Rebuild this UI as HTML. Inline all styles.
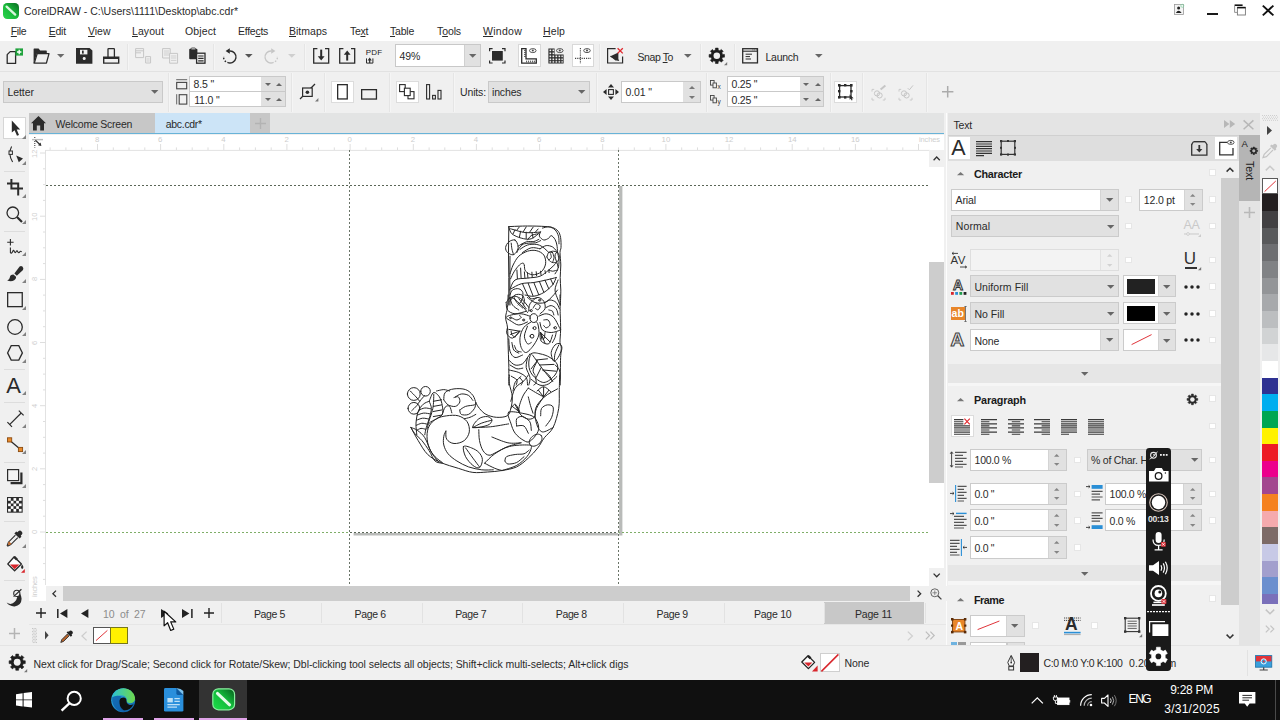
<!DOCTYPE html>
<html><head><meta charset="utf-8"><title>CorelDRAW</title>
<style>
*{box-sizing:border-box;margin:0;padding:0}
html,body{width:1280px;height:720px;overflow:hidden;background:#f0f0f0;font-family:"Liberation Sans",sans-serif;font-size:12px;color:#222}
.a{position:absolute}
.t{position:absolute;white-space:pre;line-height:1.16}
svg{position:absolute;overflow:visible}
u{text-decoration:underline;text-underline-offset:1px}
</style></head><body>
<!-- s_top -->
<div class="a" style="left:0px;top:0px;width:1280px;height:41px;background:#fff;"></div>
<svg style="left:2.5px;top:2.5px" width="16" height="16" viewBox="0 0 16 16"><defs><linearGradient id="lg" x1="0" y1="1" x2="1" y2="0"><stop offset="0" stop-color="#2bd44c"/><stop offset=".5" stop-color="#19b83a"/><stop offset="1" stop-color="#0a6a22"/></linearGradient></defs><rect x="0" y="0" width="16" height="16" rx="4.2" fill="url(#lg)"/><path d="M3.6 3.6 L12.2 11.6" stroke="#d9f7dd" stroke-width="2.3" stroke-linecap="round"/></svg>
<div class="t" style="left:24.0px;top:5.2px;font-size:10.5px;letter-spacing:0.006px;color:#2a2a2a;">CorelDRAW - C:\Users\1111\Desktop\abc.cdr*</div>
<svg style="left:1174px;top:4px" width="10" height="11" viewBox="0 0 10 11"><rect x=".5" y=".5" width="9" height="10" fill="#f4f4f4" stroke="#9a9a9a" stroke-width=".8"/><circle cx="4.6" cy="4" r="1.5" fill="#222"/><path d="M1.8 9 Q4.6 4.5 7.6 9Z" fill="#222"/><circle cx="8.3" cy="1.8" r="1.5" fill="none" stroke="#7fd6a0" stroke-width=".7"/></svg>
<div class="a" style="left:1207px;top:13px;width:10.5px;height:2px;background:#1a1a1a;"></div>
<svg style="left:1234px;top:4px" width="12" height="12" viewBox="0 0 12 12"><path d="M.6 1.2H8.6" stroke="#111" stroke-width="1.6"/><path d="M.6 1.5V8.4H3" stroke="#888" stroke-width=".9" fill="none"/><rect x="3.4" y="3.6" width="8" height="7.4" fill="#fff" stroke="#777" stroke-width=".9"/><path d="M3.2 3.6H11.6" stroke="#111" stroke-width="1.6"/></svg>
<svg style="left:1262px;top:4.5px" width="12" height="11" viewBox="0 0 12 11"><path d="M.8 .6L11.4 10.4M11.4 .6L.8 10.4" stroke="#111" stroke-width="1.9"/></svg>
<div class="t" style="left:10.8px;top:25.3px;font-size:10.5px;letter-spacing:-0.355px;color:#2a2a2a;"><u>F</u>ile</div>
<div class="t" style="left:48.8px;top:25.3px;font-size:10.5px;letter-spacing:-0.273px;color:#2a2a2a;"><u>E</u>dit</div>
<div class="t" style="left:88.0px;top:25.3px;font-size:10.5px;letter-spacing:-0.017px;color:#2a2a2a;"><u>V</u>iew</div>
<div class="t" style="left:132.0px;top:25.3px;font-size:10.5px;letter-spacing:0.079px;color:#2a2a2a;"><u>L</u>ayout</div>
<div class="t" style="left:185.0px;top:25.3px;font-size:10.5px;letter-spacing:0.109px;color:#2a2a2a;">Ob<u>j</u>ect</div>
<div class="t" style="left:238.0px;top:25.3px;font-size:10.5px;letter-spacing:-0.272px;color:#2a2a2a;">Effe<u>c</u>ts</div>
<div class="t" style="left:289.0px;top:25.3px;font-size:10.5px;letter-spacing:0.010px;color:#2a2a2a;"><u>B</u>itmaps</div>
<div class="t" style="left:350.0px;top:25.3px;font-size:10.5px;letter-spacing:-0.314px;color:#2a2a2a;">Te<u>x</u>t</div>
<div class="t" style="left:390.0px;top:25.3px;font-size:10.5px;letter-spacing:-0.220px;color:#2a2a2a;"><u>T</u>able</div>
<div class="t" style="left:437.0px;top:25.3px;font-size:10.5px;letter-spacing:-0.102px;color:#2a2a2a;">T<u>o</u>ols</div>
<div class="t" style="left:483.0px;top:25.3px;font-size:10.5px;letter-spacing:0.276px;color:#2a2a2a;"><u>W</u>indow</div>
<div class="t" style="left:543.0px;top:25.3px;font-size:10.5px;letter-spacing:0.102px;color:#2a2a2a;"><u>H</u>elp</div>
<div class="a" style="left:0px;top:41px;width:1280px;height:30px;background:#f0f0f0;"></div>
<div class="a" style="left:0px;top:70.5px;width:1280px;height:1px;background:#e2e2e2;"></div>
<div class="a" style="left:0px;top:71.5px;width:1280px;height:41.5px;background:#f0f0f0;"></div>
<svg style="left:6px;top:47.5px" width="18" height="17" viewBox="0 0 18 17"><path d="M4.2 3.6H9.6V15.4H1.2V6.6Z" fill="none" stroke="#2b2b2b" stroke-width="1.3" stroke-linejoin="round"/><rect x="9.4" y=".4" width="7.6" height="7.2" fill="#1fa23c"/><path d="M13.2 1.8V6.2M11 4H15.4" stroke="#fff" stroke-width="1.3"/></svg>
<svg style="left:33px;top:48px" width="17" height="16" viewBox="0 0 17 16"><path d="M.6 15.2V1.2Q.6 .6 1.2 .6H5.6L7.2 2.6H13.2Q13.8 2.6 13.8 3.2V5.2H4L.9 15.2Z" fill="#2b2b2b"/><path d="M4.2 5.6H16L13.4 15.2H1.2Z" fill="#f0f0f0" stroke="#2b2b2b" stroke-width="1.3" stroke-linejoin="round"/></svg>
<svg style="left:57px;top:53.9px" width="7.4" height="3.8"><path d="M0 0H7.4L3.7 3.8Z" fill="#6a6a6a"/></svg>
<svg style="left:76px;top:48px" width="16.4" height="15.8" viewBox="0 0 16.4 15.8"><path d="M0 0H13.6L16.4 2.6V15.8H0Z" fill="#2b2b2b"/><rect x="4" y="1.8" width="7.4" height="4.6" fill="#f0f0f0"/><rect x="6" y="2.6" width="1.7" height="3" fill="#2b2b2b"/><circle cx="8.2" cy="10.6" r="1.5" fill="#f0f0f0"/></svg>
<svg style="left:102.5px;top:48px" width="16.4" height="15.8" viewBox="0 0 16.4 15.8"><path d="M5 9V1.2Q5 .7 5.6 .7H10.8Q11.4 .7 11.4 1.2V9" fill="none" stroke="#2b2b2b" stroke-width="1.3"/><path d="M.7 9.2H15.7V15.1H.7Z" fill="none" stroke="#2b2b2b" stroke-width="1.4"/><path d="M.7 9.2H15.7V11H.7Z" fill="#2b2b2b"/></svg>
<div class="a" style="left:127px;top:43.5px;width:1px;height:26px;background:#e5e5e5;"></div>
<div class="a" style="left:128px;top:43.5px;width:1px;height:26px;background:#f5f5f5;"></div>
<svg style="left:135px;top:48px" width="16.4" height="15.8" viewBox="0 0 16.4 15.8"><path d="M.6 .6H8.6V9.6H.6Z" fill="none" stroke="#c6c6c6" stroke-width="1"/><path d="M.6 2.8H8.6M.6 4.8H6" stroke="#c6c6c6" stroke-width="1"/><path d="M10.6 8.6H15.6V15H10.6Z" fill="none" stroke="#c6c6c6" stroke-width="1"/><path d="M11.6 11H14.6M11.6 13H14.6" stroke="#c6c6c6" stroke-width=".8"/></svg>
<svg style="left:162px;top:48px" width="16.4" height="15.8" viewBox="0 0 16.4 15.8"><path d="M.6 .6H8.2V10H.6Z" fill="none" stroke="#c6c6c6" stroke-width="1"/><path d="M2 3H7M2 5H7M2 7H7" stroke="#c6c6c6" stroke-width=".8"/><path d="M7.6 5.4H15.6V15.2H7.6Z" fill="#f0f0f0" stroke="#c6c6c6" stroke-width="1"/><path d="M9 8H14.4M9 10H14.4M9 12.4H14.4" stroke="#c6c6c6" stroke-width=".8"/></svg>
<svg style="left:188.6px;top:48px" width="16.8" height="15.8" viewBox="0 0 16.8 15.8"><rect x=".2" y=".8" width="8.2" height="10.4" rx="1" fill="#2b2b2b"/><rect x="2.2" y="0" width="4.2" height="1.8" rx=".6" fill="#f0f0f0" stroke="#2b2b2b" stroke-width=".8"/><rect x="7.6" y="5.2" width="8.4" height="10" fill="#f0f0f0" stroke="#2b2b2b" stroke-width="1.3"/><path d="M9.2 8H14.6M9.2 10.4H14.6M9.2 12.8H14.6" stroke="#2b2b2b" stroke-width="1.2"/></svg>
<div class="a" style="left:212.5px;top:43.5px;width:1px;height:26px;background:#e5e5e5;"></div>
<div class="a" style="left:213.5px;top:43.5px;width:1px;height:26px;background:#f5f5f5;"></div>
<svg style="left:221px;top:47.5px" width="17" height="17" viewBox="0 0 17 17"><path d="M8.6 3A6 6 0 1 1 6.4 14.4" fill="none" stroke="#2b2b2b" stroke-width="1.4"/><path d="M5 13.8A6 6 0 0 1 2.6 8" fill="none" stroke="#2b2b2b" stroke-width="1.4" stroke-dasharray="1.6 1.6"/><path d="M4.6 3L8.8 .2V5.8Z" fill="#2b2b2b"/></svg>
<svg style="left:244.8px;top:53.9px" width="7.6" height="3.8"><path d="M0 0H7.6L3.8 3.8Z" fill="#555"/></svg>
<svg style="left:263px;top:47.5px" width="17" height="17" viewBox="0 0 17 17"><path d="M8.4 3A6 6 0 1 0 10.6 14.4" fill="none" stroke="#c6c6c6" stroke-width="1.3"/><path d="M12 13.8A6 6 0 0 0 14.4 8" fill="none" stroke="#c6c6c6" stroke-width="1.3" stroke-dasharray="1.6 1.6"/><path d="M12.4 3L8.2 .2V5.8Z" fill="#c6c6c6"/></svg>
<svg style="left:287.7px;top:53.9px" width="7.6" height="3.8"><path d="M0 0H7.6L3.8 3.8Z" fill="#cfcfcf"/></svg>
<div class="a" style="left:304px;top:43.5px;width:1px;height:26px;background:#e5e5e5;"></div>
<div class="a" style="left:305px;top:43.5px;width:1px;height:26px;background:#f5f5f5;"></div>
<svg style="left:312.5px;top:48px" width="16.4" height="15.8" viewBox="0 0 16.4 15.8"><path d="M4.4 .7H.7V15.1H15.7V.7H12" fill="none" stroke="#2b2b2b" stroke-width="1.3"/><path d="M8.2 1.6V9.4" stroke="#2b2b2b" stroke-width="2"/><path d="M4.8 8.2H11.6L8.2 12.6Z" fill="#2b2b2b"/></svg>
<svg style="left:339px;top:48px" width="16.4" height="15.8" viewBox="0 0 16.4 15.8"><path d="M4.4 .7H.7V15.1H15.7V.7H12" fill="none" stroke="#2b2b2b" stroke-width="1.3"/><path d="M8.2 5.6V12.6" stroke="#2b2b2b" stroke-width="2"/><path d="M4.8 6.8H11.6L8.2 2.4Z" fill="#2b2b2b"/></svg>
<div class="t" style="left:365.8px;top:47.6px;font-size:8px;letter-spacing:0.133px;color:#1e1e1e;">PDF</div>
<svg style="left:366px;top:57.2px" width="8" height="6.6" viewBox="0 0 8 6.6"><path d="M.5 1.4V6.1H6.9V1.4" fill="none" stroke="#2b2b2b" stroke-width="1"/><path d="M3.7 6V2.6" stroke="#2b2b2b" stroke-width="1.2"/><path d="M1.6 3.4H5.8L3.7 .4Z" fill="#2b2b2b"/></svg>
<div class="a" style="left:395px;top:44.4px;width:86px;height:22.8px;background:#fff;border:1px solid #c8c8c8"></div>
<div class="a" style="left:463.5px;top:45.4px;width:16.5px;height:20.8px;background:#e1e1e1;border-left:1px solid #d0d0d0"></div>
<div class="t" style="left:399.6px;top:50.4px;font-size:10.5px;letter-spacing:-0.138px;color:#2a2a2a;">49%</div>
<svg style="left:468.7px;top:54.1px" width="7.4" height="3.8"><path d="M0 0H7.4L3.7 3.8Z" fill="#666"/></svg>
<svg style="left:488.5px;top:48px" width="16.6" height="15.6" viewBox="0 0 16.6 15.6"><rect x="3" y="3" width="10.8" height="9.6" fill="#2b2b2b"/><path d="M.6 3.2V.6H3.6M13 .6H16V3.2M16 12.4V15H13M3.6 15H.6V12.4" fill="none" stroke="#2b2b2b" stroke-width="1.2"/></svg>
<div class="a" style="left:518px;top:44.4px;width:22.8px;height:22.8px;background:#fff;border:1px solid #d8d8d8"></div>
<svg style="left:521.2px;top:48px" width="16" height="15.8" viewBox="0 0 16 15.8"><path d="M.7 .7H5V10.8H15.3V15.1H.7Z" fill="#fff" stroke="#2b2b2b" stroke-width="1.3"/><path d="M3 2.4H4.6M3 4.4H4.6M3 6.4H4.6M3 8.4H4.6M5.6 12.6V14.4M7.6 12.6V14.4M9.6 12.6V14.4M11.6 12.6V14.4M13.4 12.6V14.4" stroke="#2b2b2b" stroke-width=".8"/><ellipse cx="11.8" cy="2.6" rx="3.3" ry="2" fill="none" stroke="#444" stroke-width=".9"/><circle cx="11.8" cy="2.6" r="1" fill="#444"/></svg>
<svg style="left:548px;top:48px" width="16" height="15.8" viewBox="0 0 16 15.8"><path d="M.4 .4H6.6V6.4H15.6V15.4H.4Z" fill="#2b2b2b"/><g fill="#f0f0f0"><rect x="1.5" y="1.5" width="1.7" height="1.7"/><rect x="4.5" y="1.5" width="1.7" height="1.7"/><rect x="1.5" y="4.5" width="1.7" height="1.7"/><rect x="4.5" y="4.5" width="1.7" height="1.7"/><rect x="1.5" y="7.5" width="1.7" height="1.7"/><rect x="4.5" y="7.5" width="1.7" height="1.7"/><rect x="7.5" y="7.5" width="1.7" height="1.7"/><rect x="10.5" y="7.5" width="1.7" height="1.7"/><rect x="13.4" y="7.5" width="1.4" height="1.7"/><rect x="1.5" y="10.5" width="1.7" height="1.7"/><rect x="4.5" y="10.5" width="1.7" height="1.7"/><rect x="7.5" y="10.5" width="1.7" height="1.7"/><rect x="10.5" y="10.5" width="1.7" height="1.7"/><rect x="13.4" y="10.5" width="1.4" height="1.7"/><rect x="1.5" y="13.2" width="1.7" height="1.4"/><rect x="4.5" y="13.2" width="1.7" height="1.4"/><rect x="7.5" y="13.2" width="1.7" height="1.4"/><rect x="10.5" y="13.2" width="1.7" height="1.4"/><rect x="13.4" y="13.2" width="1.4" height="1.4"/></g><ellipse cx="11.8" cy="2.6" rx="3.3" ry="2" fill="none" stroke="#444" stroke-width=".9"/><circle cx="11.8" cy="2.6" r="1" fill="#444"/></svg>
<div class="a" style="left:571.5px;top:44.4px;width:22.6px;height:22.8px;background:#fff;border:1px solid #d8d8d8"></div>
<svg style="left:574.6px;top:48px" width="16.4" height="15.8" viewBox="0 0 16.4 15.8"><path d="M5.4 0V15.8M0 10.4H16" stroke="#444" stroke-width="1.1" stroke-dasharray="1.2 1"/><ellipse cx="12" cy="2.6" rx="3.3" ry="2" fill="none" stroke="#444" stroke-width=".9"/><circle cx="12" cy="2.6" r="1" fill="#444"/></svg>
<div class="a" style="left:598.7px;top:43.5px;width:1px;height:26px;background:#e5e5e5;"></div>
<div class="a" style="left:599.7px;top:43.5px;width:1px;height:26px;background:#f5f5f5;"></div>
<svg style="left:607px;top:48px" width="16.4" height="15.6" viewBox="0 0 16.4 15.6"><path d="M8.6 .6H.6V15H15.6V8.4" fill="none" stroke="#2b2b2b" stroke-width="1.2"/><path d="M3.4 8.2L11.4 4.4V12.6H8.4Z" fill="#2b2b2b"/><path d="M3.4 8.2L12 12.4" stroke="#2b2b2b" stroke-width="1.1"/><path d="M10.6 .2L15.8 5.4M15.8 .2L10.6 5.4" stroke="#e0262c" stroke-width="1.3"/></svg>
<div class="t" style="left:637.4px;top:50.5px;font-size:10.5px;letter-spacing:-0.391px;color:#2a2a2a;">Snap <u>T</u>o</div>
<svg style="left:684.2px;top:54.4px" width="7.6" height="3.8"><path d="M0 0H7.6L3.8 3.8Z" fill="#666"/></svg>
<div class="a" style="left:700px;top:43.5px;width:1px;height:26px;background:#e5e5e5;"></div>
<div class="a" style="left:701px;top:43.5px;width:1px;height:26px;background:#f5f5f5;"></div>
<svg style="left:709.2px;top:48.2px" width="15.6" height="15.6" viewBox="0 0 15.6 15.6"><path d="M6.46 0.12L9.14 0.12L9.18 2.04L10.90 2.75L12.29 1.42L14.18 3.31L12.85 4.70L13.56 6.42L15.48 6.46L15.48 9.14L13.56 9.18L12.85 10.90L14.18 12.29L12.29 14.18L10.90 12.85L9.18 13.56L9.14 15.48L6.46 15.48L6.42 13.56L4.70 12.85L3.31 14.18L1.42 12.29L2.75 10.90L2.04 9.18L0.12 9.14L0.12 6.46L2.04 6.42L2.75 4.70L1.42 3.31L3.31 1.42L4.70 2.75L6.42 2.04Z" fill="#1e1e1e" stroke="#1e1e1e" stroke-width=".6" stroke-linejoin="round"/><circle cx="7.8" cy="7.8" r="3.28" fill="#f0f0f0"/></svg>
<svg style="left:723.5px;top:61.5px" width="3.2" height="3.2" viewBox="0 0 3.2 3.2"><path d="M3.2 0V3.2H0Z" fill="#777"/></svg>
<div class="a" style="left:733.5px;top:43.5px;width:1px;height:26px;background:#e5e5e5;"></div>
<div class="a" style="left:734.5px;top:43.5px;width:1px;height:26px;background:#f5f5f5;"></div>
<svg style="left:742px;top:48px" width="16.2" height="15.6" viewBox="0 0 16.2 15.6"><rect x=".7" y=".7" width="14.8" height="14.2" fill="none" stroke="#2b2b2b" stroke-width="1.3"/><path d="M.7 3.2H15.5" stroke="#2b2b2b" stroke-width="1.1"/><path d="M3.6 6.2H10M3.6 8.6H8M3.6 11H9" stroke="#2b2b2b" stroke-width="1"/><path d="M10.4 1.9H11.4M12.2 1.9H13.2M14 1.9H14.8" stroke="#2b2b2b" stroke-width=".7"/></svg>
<div class="t" style="left:765.5px;top:50.5px;font-size:10.5px;letter-spacing:-0.274px;color:#2a2a2a;">Launch</div>
<svg style="left:814.5px;top:54.4px" width="7.6" height="3.8"><path d="M0 0H7.6L3.8 3.8Z" fill="#666"/></svg>
<div class="a" style="left:3px;top:80.7px;width:160px;height:22.4px;background:#e1e1e1;border:1px solid #c9c9c9"></div>
<div class="t" style="left:7.4px;top:86.1px;font-size:10.5px;letter-spacing:-0.041px;color:#2a2a2a;">Letter</div>
<svg style="left:151.1px;top:90.3px" width="7.4" height="3.8"><path d="M0 0H7.4L3.7 3.8Z" fill="#666"/></svg>
<div class="a" style="left:168px;top:73px;width:1px;height:39px;background:#e5e5e5;"></div>
<div class="a" style="left:169px;top:73px;width:1px;height:39px;background:#f5f5f5;"></div>
<svg style="left:176px;top:79px" width="11.4" height="10.4" viewBox="0 0 11.4 10.4"><path d="M.2 .7H11.2" stroke="#555" stroke-width=".9"/><rect x=".7" y="3.4" width="10" height="6.4" fill="none" stroke="#444" stroke-width="1.1"/></svg>
<svg style="left:176px;top:94px" width="11.4" height="10.6" viewBox="0 0 11.4 10.6"><path d="M.7 .2V10.4" stroke="#555" stroke-width=".9"/><rect x="3.2" y=".7" width="7.6" height="9.4" fill="none" stroke="#444" stroke-width="1.1"/></svg>
<div class="a" style="left:189px;top:76px;width:97px;height:31.4px;background:#fff;border:1px solid #c9c9c9"></div>
<div class="a" style="left:261.3px;top:77px;width:23.7px;height:29.4px;background:#e1e1e1;"></div>
<div class="a" style="left:190px;top:91px;width:95px;height:1px;background:#c9c9c9;"></div>
<div class="t" style="left:193.6px;top:78.2px;font-size:10.5px;letter-spacing:-0.128px;color:#2a2a2a;">8.5 &quot;</div>
<div class="t" style="left:194.2px;top:93.6px;font-size:10.5px;letter-spacing:-0.150px;color:#2a2a2a;">11.0 &quot;</div>
<svg style="left:264.6px;top:82.5px" width="6" height="3"><path d="M0 0H6L3 3Z" fill="#666"/></svg>
<svg style="left:276.4px;top:82.5px" width="6" height="3"><path d="M0 3H6L3 0Z" fill="#666"/></svg>
<svg style="left:264.6px;top:97.9px" width="6" height="3"><path d="M0 0H6L3 3Z" fill="#666"/></svg>
<svg style="left:276.4px;top:97.9px" width="6" height="3"><path d="M0 3H6L3 0Z" fill="#666"/></svg>
<div class="a" style="left:290.6px;top:73px;width:1px;height:39px;background:#e5e5e5;"></div>
<div class="a" style="left:291.6px;top:73px;width:1px;height:39px;background:#f5f5f5;"></div>
<svg style="left:299px;top:83px" width="17" height="17" viewBox="0 0 17 17"><path d="M1 16L16 1" stroke="#2b2b2b" stroke-width="1.2"/><rect x="3.6" y="5" width="9.6" height="8.4" fill="#f0f0f0" stroke="#2b2b2b" stroke-width="1.2"/><circle cx="8.4" cy="9.2" r="1.8" fill="#2b2b2b"/></svg>
<svg style="left:314.6px;top:98.4px" width="3.4" height="3.4" viewBox="0 0 3.4 3.4"><path d="M3.4 0V3.4H0Z" fill="#777"/></svg>
<div class="a" style="left:323.5px;top:73px;width:1px;height:39px;background:#e5e5e5;"></div>
<div class="a" style="left:324.5px;top:73px;width:1px;height:39px;background:#f5f5f5;"></div>
<div class="a" style="left:331px;top:80.5px;width:22.8px;height:22.6px;background:#fff;border:1px solid #dcdcdc"></div>
<svg style="left:337px;top:84px" width="11" height="15.6" viewBox="0 0 11 15.6"><rect x=".65" y=".65" width="9.6" height="14.3" fill="none" stroke="#2b2b2b" stroke-width="1.3"/></svg>
<svg style="left:361px;top:89px" width="16.2" height="10.8" viewBox="0 0 16.2 10.8"><rect x=".65" y=".65" width="14.8" height="9.4" fill="none" stroke="#2b2b2b" stroke-width="1.3"/></svg>
<div class="a" style="left:388.7px;top:73px;width:1px;height:39px;background:#e5e5e5;"></div>
<div class="a" style="left:389.7px;top:73px;width:1px;height:39px;background:#f5f5f5;"></div>
<div class="a" style="left:396px;top:80.5px;width:22.8px;height:22.6px;background:#fff;border:1px solid #dcdcdc"></div>
<svg style="left:399.4px;top:84px" width="16" height="15.6" viewBox="0 0 16 15.6"><rect x=".6" y=".6" width="5.6" height="7" fill="#fff" stroke="#2b2b2b" stroke-width="1.1"/><rect x="9" y="7.6" width="6" height="7.2" fill="#fff" stroke="#2b2b2b" stroke-width="1.1"/><rect x="5.4" y="4.2" width="5.8" height="7.4" fill="#fff" stroke="#2b2b2b" stroke-width="1.1"/></svg>
<svg style="left:426px;top:84px" width="16" height="15.6" viewBox="0 0 16 15.6"><rect x=".6" y=".6" width="3" height="14.4" fill="none" stroke="#2b2b2b" stroke-width="1.1"/><rect x="6.6" y="11.4" width="2.8" height="3.6" fill="none" stroke="#2b2b2b" stroke-width="1.1"/><rect x="12" y="6.4" width="3" height="8.6" fill="none" stroke="#2b2b2b" stroke-width="1.1"/></svg>
<div class="a" style="left:453px;top:73px;width:1px;height:39px;background:#e5e5e5;"></div>
<div class="a" style="left:454px;top:73px;width:1px;height:39px;background:#f5f5f5;"></div>
<div class="t" style="left:460.0px;top:86.3px;font-size:10.5px;letter-spacing:-0.140px;color:#2a2a2a;">Units:</div>
<div class="a" style="left:488px;top:80.7px;width:102px;height:22.2px;background:#e1e1e1;border:1px solid #c9c9c9"></div>
<div class="t" style="left:492.0px;top:86.3px;font-size:10.5px;letter-spacing:-0.158px;color:#2a2a2a;">inches</div>
<svg style="left:578px;top:90.3px" width="7.4" height="3.8"><path d="M0 0H7.4L3.7 3.8Z" fill="#666"/></svg>
<div class="a" style="left:595.6px;top:73px;width:1px;height:39px;background:#e5e5e5;"></div>
<div class="a" style="left:596.6px;top:73px;width:1px;height:39px;background:#f5f5f5;"></div>
<svg style="left:602.6px;top:84px" width="16" height="16" viewBox="0 0 16 16"><rect x="5.6" y="5.6" width="4.8" height="4.8" fill="none" stroke="#2b2b2b" stroke-width="1.1"/><path d="M8 0L11 3.6H5ZM8 16L11 12.4H5ZM0 8L3.6 5V11ZM16 8L12.4 5V11Z" fill="#2b2b2b"/></svg>
<div class="a" style="left:621px;top:80.7px;width:80px;height:22.2px;background:#fff;border:1px solid #c9c9c9"></div>
<div class="a" style="left:683px;top:81.7px;width:17px;height:20.2px;background:#e1e1e1;"></div>
<div class="t" style="left:625.5px;top:86.3px;font-size:10.5px;letter-spacing:-0.130px;color:#2a2a2a;">0.01 &quot;</div>
<svg style="left:689px;top:85.5px" width="6" height="3"><path d="M0 3H6L3 0Z" fill="#777"/></svg>
<svg style="left:689px;top:95.9px" width="6" height="3"><path d="M0 0H6L3 3Z" fill="#777"/></svg>
<div class="a" style="left:705.8px;top:73px;width:1px;height:39px;background:#e5e5e5;"></div>
<div class="a" style="left:706.8px;top:73px;width:1px;height:39px;background:#f5f5f5;"></div>
<svg style="left:710px;top:79.6px" width="13" height="10" viewBox="0 0 13 10"><rect x=".5" y=".5" width="3.6" height="4.6" fill="none" stroke="#444" stroke-width=".9"/><rect x="3" y="3" width="3.4" height="4.8" fill="#f0f0f0" stroke="#444" stroke-width=".9"/></svg>
<div class="t" style="left:717.4px;top:83.2px;font-size:6.5px;color:#333;">x</div>
<svg style="left:710px;top:94.6px" width="13" height="10" viewBox="0 0 13 10"><rect x=".5" y=".5" width="3.6" height="4.6" fill="none" stroke="#444" stroke-width=".9"/><rect x="3" y="3" width="3.4" height="4.8" fill="#f0f0f0" stroke="#444" stroke-width=".9"/></svg>
<div class="t" style="left:717.4px;top:98.2px;font-size:6.5px;color:#333;">y</div>
<div class="a" style="left:726.7px;top:76.4px;width:97px;height:30.2px;background:#fff;border:1px solid #c9c9c9"></div>
<div class="a" style="left:799.6px;top:77.4px;width:23.1px;height:28.2px;background:#e1e1e1;"></div>
<div class="a" style="left:727.7px;top:91px;width:95px;height:1px;background:#c9c9c9;"></div>
<div class="t" style="left:731.6px;top:78.3px;font-size:10.5px;letter-spacing:-0.246px;color:#2a2a2a;">0.25 &quot;</div>
<svg style="left:802.7px;top:82.7px" width="6" height="3"><path d="M0 0H6L3 3Z" fill="#666"/></svg>
<svg style="left:814.5px;top:82.7px" width="6" height="3"><path d="M0 3H6L3 0Z" fill="#666"/></svg>
<div class="t" style="left:731.6px;top:93.5px;font-size:10.5px;letter-spacing:-0.246px;color:#2a2a2a;">0.25 &quot;</div>
<svg style="left:802.7px;top:97.9px" width="6" height="3"><path d="M0 0H6L3 3Z" fill="#666"/></svg>
<svg style="left:814.5px;top:97.9px" width="6" height="3"><path d="M0 3H6L3 0Z" fill="#666"/></svg>
<div class="a" style="left:829.7px;top:73px;width:1px;height:39px;background:#e5e5e5;"></div>
<div class="a" style="left:830.7px;top:73px;width:1px;height:39px;background:#f5f5f5;"></div>
<div class="a" style="left:834px;top:80.8px;width:22.6px;height:22.6px;background:#fff;border:1px solid #dcdcdc"></div>
<svg style="left:837.6px;top:84.4px" width="15.6" height="15.6" viewBox="0 0 15.6 15.6"><rect x="1.6" y="1.6" width="11.4" height="11.4" fill="none" stroke="#2b2b2b" stroke-width="1.3"/><g fill="#2b2b2b"><rect x="0" y="0" width="2.6" height="2.6"/><rect x="6" y="0" width="2.4" height="2.4"/><rect x="12" y="0" width="2.6" height="2.6"/><rect x="0" y="6" width="2.4" height="2.4"/><rect x="12.2" y="6" width="2.4" height="2.4"/><rect x="0" y="12" width="2.6" height="2.6"/><rect x="6" y="12.2" width="2.4" height="2.4"/></g><path d="M11.6 10.6L15.6 14.2L13.8 14.4L14.6 16L13.6 16.4L12.8 14.8L11.6 15.8Z" fill="#2b2b2b"/></svg>
<div class="a" style="left:861.5px;top:73px;width:1px;height:39px;background:#e5e5e5;"></div>
<div class="a" style="left:862.5px;top:73px;width:1px;height:39px;background:#f5f5f5;"></div>
<svg style="left:871.4px;top:85px" width="16" height="16" viewBox="0 0 16 16"><circle cx="6" cy="8.4" r="2.6" fill="none" stroke="#c6c6c6" stroke-width="1"/><circle cx="8.6" cy="10.4" r="2.6" fill="none" stroke="#c6c6c6" stroke-width="1"/><path d="M1 6.6V4.4H3.2M11.8 15H14V12.8M1 12.8V15H3.2" fill="none" stroke="#c6c6c6" stroke-width=".9"/><path d="M9.6 4.6L14.4 .4" stroke="#c6c6c6" stroke-width="2"/></svg>
<svg style="left:897.6px;top:85px" width="16" height="16" viewBox="0 0 16 16"><circle cx="6" cy="8.4" r="2.6" fill="none" stroke="#c6c6c6" stroke-width="1"/><circle cx="8.6" cy="10.4" r="2.6" fill="none" stroke="#c6c6c6" stroke-width="1"/><path d="M1 6.6V4.4H3.2M11.8 15H14V12.8M1 12.8V15H3.2" fill="none" stroke="#c6c6c6" stroke-width=".9"/><path d="M9.8 3.2L11.4 4.8L15 .4" fill="none" stroke="#c6c6c6" stroke-width="1"/></svg>
<div class="a" style="left:926.4px;top:73px;width:1px;height:39px;background:#e5e5e5;"></div>
<div class="a" style="left:927.4px;top:73px;width:1px;height:39px;background:#f5f5f5;"></div>
<svg style="left:941.6px;top:86.2px" width="11.4" height="11.4" viewBox="0 0 11.4 11.4"><path d="M5.7 0V11.4M0 5.7H11.4" stroke="#ababab" stroke-width="1.5"/></svg>
<!-- s_canvas -->
<div class="a" style="left:29px;top:112.8px;width:918px;height:20.6px;background:#e3e4e4;"></div>
<div class="a" style="left:29px;top:112.8px;width:125.5px;height:20.6px;background:#c7c7c7;"></div>
<div class="a" style="left:154.5px;top:112.8px;width:95.5px;height:20.6px;background:#cce4f7;"></div>
<div class="a" style="left:250px;top:112.8px;width:19.8px;height:20.6px;background:#c7c7c7;"></div>
<svg style="left:31.4px;top:116.2px" width="15" height="14.4" viewBox="0 0 15 14.4"><path d="M7.5 0L15 7.2H13V14.4H9.2V9.4H5.8V14.4H2V7.2H0Z" fill="#2b2b2b"/></svg>
<div class="t" style="left:55.6px;top:117.7px;font-size:10.5px;letter-spacing:-0.225px;color:#2a2a2a;">Welcome Screen</div>
<div class="t" style="left:165.8px;top:117.7px;font-size:10.5px;letter-spacing:-0.315px;color:#2a2a2a;">abc.cdr*</div>
<svg style="left:254.5px;top:118px" width="11" height="11" viewBox="0 0 11 11"><path d="M5.5 0V11M0 5.5H11" stroke="#b3b3b3" stroke-width="1.4"/></svg>
<div class="a" style="left:29px;top:133.2px;width:918px;height:1.3px;background:#68b3d8;"></div>
<div class="a" style="left:29px;top:134.5px;width:918px;height:466.5px;background:#fff;"></div>
<svg style="left:0px;top:0px" width="1280" height="720" viewBox="0 0 1280 720"><path d="M45.5 150.4H930M45.5 150V585" stroke="#e2e2e2" stroke-width="1" fill="none"/><path d="M50.1 147.4V150M65.9 147.4V150M81.7 147.4V150M97.5 144V150M113.3 147.4V150M129.0 147.4V150M144.8 147.4V150M160.6 144V150M176.4 147.4V150M192.2 147.4V150M208.0 147.4V150M223.8 144V150M239.6 147.4V150M255.4 147.4V150M271.2 147.4V150M286.9 144V150M302.7 147.4V150M318.5 147.4V150M334.3 147.4V150M350.1 144V150M365.9 147.4V150M381.7 147.4V150M397.5 147.4V150M413.3 144V150M429.1 147.4V150M444.8 147.4V150M460.6 147.4V150M476.4 144V150M492.2 147.4V150M508.0 147.4V150M523.8 147.4V150M539.6 144V150M555.4 147.4V150M571.2 147.4V150M587.0 147.4V150M602.7 144V150M618.5 147.4V150M634.3 147.4V150M650.1 147.4V150M665.9 144V150M681.7 147.4V150M697.5 147.4V150M713.3 147.4V150M729.1 144V150M744.9 147.4V150M760.6 147.4V150M776.4 147.4V150M792.2 144V150M808.0 147.4V150M823.8 147.4V150M839.6 147.4V150M855.4 144V150M871.2 147.4V150M887.0 147.4V150M902.8 147.4V150M918.5 144V150M43 579.4H45.5M43 563.6H45.5M43 547.8H45.5M40 532.0H45.5M43 516.2H45.5M43 500.4H45.5M43 484.6H45.5M40 468.8H45.5M43 453.1H45.5M43 437.3H45.5M43 421.5H45.5M40 405.7H45.5M43 389.9H45.5M43 374.1H45.5M43 358.3H45.5M40 342.5H45.5M43 326.7H45.5M43 310.9H45.5M43 295.1H45.5M40 279.4H45.5M43 263.6H45.5M43 247.8H45.5M43 232.0H45.5M40 216.2H45.5M43 200.4H45.5M43 184.6H45.5M43 168.8H45.5M40 153.0H45.5" stroke="#dedede" stroke-width="1" fill="none"/></svg>
<div class="t" style="left:94.9px;top:135.3px;font-size:7.8px;color:#cdcdcd;">8</div>
<div class="t" style="left:158.0px;top:135.3px;font-size:7.8px;color:#cdcdcd;">6</div>
<div class="t" style="left:221.2px;top:135.3px;font-size:7.8px;color:#cdcdcd;">4</div>
<div class="t" style="left:284.4px;top:135.3px;font-size:7.8px;color:#cdcdcd;">2</div>
<div class="t" style="left:347.5px;top:135.3px;font-size:7.8px;color:#cdcdcd;">0</div>
<div class="t" style="left:410.7px;top:135.3px;font-size:7.8px;color:#cdcdcd;">2</div>
<div class="t" style="left:473.8px;top:135.3px;font-size:7.8px;color:#cdcdcd;">4</div>
<div class="t" style="left:537.0px;top:135.3px;font-size:7.8px;color:#cdcdcd;">6</div>
<div class="t" style="left:600.2px;top:135.3px;font-size:7.8px;color:#cdcdcd;">8</div>
<div class="t" style="left:661.6px;top:135.3px;font-size:7.8px;color:#cdcdcd;">10</div>
<div class="t" style="left:724.7px;top:135.3px;font-size:7.8px;color:#cdcdcd;">12</div>
<div class="t" style="left:787.9px;top:135.3px;font-size:7.8px;color:#cdcdcd;">14</div>
<div class="t" style="left:851.0px;top:135.3px;font-size:7.8px;color:#cdcdcd;">16</div>
<div class="t" style="left:919.0px;top:135.5px;font-size:7.5px;letter-spacing:-0.114px;color:#cfcfcf;">inches</div>
<div class="t" style="left:31px;top:534.0px;width:0;height:0;font-size:7.5px;color:#cfcfcf"><div style="position:absolute;transform:rotate(-90deg);transform-origin:0 0;white-space:nowrap">0</div></div>
<div class="t" style="left:31px;top:470.8px;width:0;height:0;font-size:7.5px;color:#cfcfcf"><div style="position:absolute;transform:rotate(-90deg);transform-origin:0 0;white-space:nowrap">2</div></div>
<div class="t" style="left:31px;top:407.7px;width:0;height:0;font-size:7.5px;color:#cfcfcf"><div style="position:absolute;transform:rotate(-90deg);transform-origin:0 0;white-space:nowrap">4</div></div>
<div class="t" style="left:31px;top:344.5px;width:0;height:0;font-size:7.5px;color:#cfcfcf"><div style="position:absolute;transform:rotate(-90deg);transform-origin:0 0;white-space:nowrap">6</div></div>
<div class="t" style="left:31px;top:281.4px;width:0;height:0;font-size:7.5px;color:#cfcfcf"><div style="position:absolute;transform:rotate(-90deg);transform-origin:0 0;white-space:nowrap">8</div></div>
<div class="t" style="left:31px;top:221.2px;width:0;height:0;font-size:7.5px;color:#cfcfcf"><div style="position:absolute;transform:rotate(-90deg);transform-origin:0 0;white-space:nowrap">10</div></div>
<div class="t" style="left:31px;top:158.0px;width:0;height:0;font-size:7.5px;color:#cfcfcf"><div style="position:absolute;transform:rotate(-90deg);transform-origin:0 0;white-space:nowrap">12</div></div>
<div class="t" style="left:31px;top:597px;width:0;height:0;font-size:7.5px;color:#cfcfcf"><div style="position:absolute;transform:rotate(-90deg);transform-origin:0 0;white-space:nowrap;letter-spacing:-.2px">inches</div></div>
<svg style="left:32px;top:137px" width="12" height="11" viewBox="0 0 12 11"><path d="M2.8 0V10.6" stroke="#333" stroke-width="1" stroke-dasharray="1 1"/><path d="M0 2.6H11" stroke="#bdbdbd" stroke-width="1.4"/><path d="M3.4 3.2L8.4 8" stroke="#333" stroke-width="1.2"/><path d="M9.4 9L6 8.2L8.6 5.6Z" fill="#333"/></svg>
<svg style="left:0px;top:0px" width="1280" height="720" viewBox="0 0 1280 720"><path d="M618.6 186H622.4V535.6H353.6V532.4H618.6Z" fill="#b9bbb9"/><rect x="349.5" y="185.5" width="269" height="347" fill="#fff" stroke="#8e8e8e" stroke-width=".9"/><path d="M46 185.5H930M349.5 150V585M618.5 150V585" stroke="#fff" stroke-width="1.2"/><path d="M46 185.5H930" stroke="#5a6657" stroke-width="1.1" stroke-dasharray="2 2"/><path d="M46 532.5H930" stroke="#7fae68" stroke-width="1" stroke-dasharray="2 2"/><path d="M349.5 150V585M618.5 150V585" stroke="#4f5b4d" stroke-width=".85" stroke-dasharray="2 2"/><path d="M350 532.5H618.4" stroke="#fff" stroke-width="1.2"/><path d="M350 532.5H618.4" stroke="#5a6657" stroke-width="1.1" stroke-dasharray="2 2"/><path d="M508.8 226.6 L508.5 252.5 L508.8 277.5 L508.8 305.0M508.8 226.6C511.9 226.5 521.5 226.0 527.5 226.0C533.5 226.0 540.8 226.2 545.0 226.5C549.2 226.8 550.3 226.7 552.5 227.5C554.7 228.3 556.8 229.6 558.1 231.2C559.5 232.9 560.1 234.8 560.6 237.5C561.1 240.2 561.1 245.0 561.0 247.5C560.9 250.0 560.0 249.6 560.0 252.5C560.0 255.4 560.7 260.8 560.8 265.0C560.8 269.2 560.2 273.3 560.2 277.5C560.2 281.7 560.7 285.4 560.8 290.0C560.8 294.6 560.4 302.5 560.4 305.0M508.8 226.9C509.3 228.0 509.8 231.9 511.9 233.8C514.0 235.6 518.0 237.3 521.2 238.1C524.5 239.0 528.0 239.8 531.2 238.8C534.5 237.7 539.1 233.0 540.6 231.9M510.6 228.8C513.0 229.4 520.1 231.9 525.0 232.5C529.9 233.1 537.5 232.2 540.0 232.1M515.0 229.8 L513.1 233.8M520.6 231.2 L519.4 237.2M526.2 232.2 L526.2 238.5M531.9 232.5 L533.1 237.9M516.9 230.0 L519.4 226.9M523.1 231.9 L526.2 226.9M529.4 232.5 L533.1 227.2M535.0 232.5 L538.1 229.0M540.6 231.9C540.4 232.6 538.9 234.9 539.4 236.2C539.9 237.6 542.2 239.7 543.8 240.0C545.3 240.3 547.5 238.9 548.8 238.1C550.0 237.4 550.2 235.4 551.2 235.6C552.3 235.8 554.1 237.8 555.0 239.4C555.9 240.9 556.5 243.0 556.9 245.0C557.3 247.0 557.4 250.2 557.5 251.2M515.0 240.0C513.4 239.3 510.3 240.6 508.8 241.9C507.2 243.1 505.8 245.7 505.6 247.5C505.4 249.3 506.2 251.3 507.5 252.5C508.8 253.7 511.6 255.0 513.1 254.8C514.7 254.5 516.0 252.7 516.9 251.2C517.7 249.8 518.4 248.1 518.1 246.2C517.8 244.4 516.6 240.7 515.0 240.0ZM511.2 243.1C511.4 244.1 511.5 246.9 511.9 248.8C512.2 250.6 513.2 253.4 513.5 254.4M524.4 265.6C524.6 266.6 524.3 269.7 525.6 271.2C527.0 272.8 529.9 274.6 532.5 274.8C535.1 274.9 539.1 273.7 541.2 271.9C543.4 270.0 545.2 266.6 545.6 263.8C546.0 260.9 545.3 257.2 543.8 255.0C542.2 252.8 539.0 251.2 536.2 250.6C533.5 250.0 530.4 250.3 527.5 251.2C524.6 252.2 521.1 254.0 518.8 256.2C516.4 258.5 514.6 262.1 513.1 265.0C511.7 267.9 510.5 272.3 510.0 273.8M524.4 265.6C524.2 265.2 524.0 263.2 523.1 263.1C522.3 263.0 520.8 263.6 519.4 265.0C517.9 266.4 515.8 269.0 514.4 271.2C512.9 273.5 511.2 277.5 510.6 278.8M518.1 246.2C519.5 245.5 523.6 242.7 526.2 241.9C528.9 241.1 531.7 241.9 533.8 241.5C535.8 241.1 537.9 239.7 538.8 239.4M520.0 249.4C521.2 248.6 524.8 245.8 527.5 245.0C530.2 244.2 533.8 244.1 536.2 244.4C538.8 244.7 540.4 245.5 542.5 246.9C544.6 248.2 547.7 251.6 548.8 252.5M522.5 252.5C524.0 251.7 528.3 248.4 531.2 247.8C534.2 247.1 538.5 248.6 540.0 248.8M540.0 248.8C541.0 248.2 544.2 245.9 546.2 245.6C548.3 245.3 550.8 246.0 552.5 246.9C554.2 247.7 555.3 249.7 556.2 250.6C557.2 251.6 557.8 252.2 558.1 252.5M548.8 252.5C549.4 252.3 551.0 251.2 552.5 251.2C554.0 251.2 556.4 251.5 557.5 252.5C558.6 253.5 559.5 255.9 559.4 257.5C559.3 259.1 558.0 261.0 556.9 261.9C555.7 262.7 553.9 262.8 552.5 262.5C551.1 262.2 549.7 260.9 548.8 260.0C547.8 259.1 547.2 257.4 546.9 256.9M552.5 262.5C552.8 261.7 554.0 259.2 554.0 257.5C554.0 255.8 552.8 253.3 552.5 252.5M509.8 290.0C510.6 288.3 512.0 282.0 515.0 280.0C518.0 278.0 523.3 278.8 527.5 278.1C531.7 277.5 536.5 277.6 540.0 276.2C543.5 274.9 546.0 272.2 548.8 270.0C551.5 267.8 555.0 264.3 556.2 263.1M527.5 272.8 L527.9 277.9M531.9 272.2 L532.2 276.8M536.2 271.7 L536.6 275.7M540.6 271.2 L541.0 274.6M545.0 270.6 L545.4 273.5M548.8 270.2 L549.1 272.6M516.9 270.0 L517.4 278.8M520.6 268.1 L521.1 278.1M524.4 271.9 L524.9 278.1M511.2 288.8C512.9 287.9 517.5 284.8 521.2 283.8C525.0 282.7 529.6 283.1 533.8 282.5C537.9 281.9 542.5 280.8 546.2 280.0C550.0 279.2 554.6 277.9 556.2 277.5M556.2 277.5C555.6 278.8 554.6 282.5 552.5 285.0C550.4 287.5 546.9 290.6 543.8 292.5C540.6 294.4 536.9 295.8 533.8 296.2C530.6 296.7 526.5 295.2 525.0 295.0M522.5 283.8 L527.5 295.0M528.1 283.1 L533.1 296.0M533.8 282.5 L538.8 294.8M539.4 281.5 L543.8 292.2M545.0 280.2 L548.8 288.8M550.6 279.0 L553.1 284.4M510.0 295.0C510.4 294.2 511.0 291.0 512.5 290.0C514.0 289.0 517.0 288.3 518.8 288.8C520.5 289.2 522.2 290.6 522.8 292.5C523.3 294.4 522.6 297.9 521.9 300.0C521.1 302.1 518.8 304.2 518.1 305.0M557.5 251.2C557.1 252.1 554.9 253.5 555.0 256.2C555.1 259.0 558.1 264.6 558.1 267.5C558.1 270.4 555.5 272.7 555.0 273.8M558.1 280.0C557.6 281.7 555.0 286.7 555.0 290.0C555.0 293.3 557.3 297.5 558.1 300.0C559.0 302.5 559.7 304.2 560.0 305.0M548.8 270.0C549.4 270.2 551.0 271.2 552.5 271.2C554.0 271.2 556.7 270.2 557.5 270.0M510.0 256.2 L509.8 280.0 L510.0 305.0M542.5 228.1C543.5 227.9 546.7 226.6 548.8 226.9C550.8 227.1 553.4 228.2 555.0 229.8C556.6 231.3 557.8 233.9 558.5 236.2C559.2 238.6 558.9 242.5 559.0 243.8M521.2 244.4C522.5 244.2 526.4 243.4 528.8 243.1C531.1 242.9 533.6 243.2 535.6 242.8C537.6 242.3 539.8 241.0 540.6 240.6M516.9 252.5C517.3 251.7 518.4 249.1 519.4 247.8C520.4 246.4 522.2 244.9 522.8 244.4M527.5 240.0C528.1 239.3 529.6 236.7 531.2 235.6C532.9 234.6 536.5 234.1 537.5 233.8M546.9 256.9C547.2 256.1 547.8 253.2 548.8 252.5C549.7 251.8 551.9 252.5 552.5 252.5M548.8 260.0C549.2 259.6 550.9 258.5 551.2 257.5C551.6 256.5 550.7 254.4 550.6 253.8M510.0 301.2C510.8 300.2 513.0 296.0 515.0 295.0C517.0 294.0 520.3 294.2 521.9 295.0C523.4 295.8 524.1 298.3 524.4 300.0C524.6 301.7 523.6 304.2 523.5 305.0M527.5 297.5C528.8 298.3 532.1 301.7 535.0 302.5C537.9 303.3 542.1 303.5 545.0 302.5C547.9 301.5 550.4 298.3 552.5 296.2C554.6 294.2 556.7 291.0 557.5 290.0M557.5 252.5C557.8 253.8 558.8 257.5 559.0 260.0C559.2 262.5 558.6 266.2 558.5 267.5M508.1 295.0C508.0 297.1 507.9 303.8 507.5 307.5C507.1 311.2 505.6 314.2 505.6 317.5C505.6 320.8 507.1 322.9 507.5 327.5C507.9 332.1 507.9 338.8 508.1 345.0C508.3 351.2 508.6 358.3 508.8 365.0C508.9 371.7 508.8 381.7 508.8 385.0M560.0 295.0C560.0 298.1 560.1 307.9 560.2 313.8C560.4 319.6 560.7 325.2 560.6 330.0C560.6 334.8 559.8 339.6 560.0 342.5C560.2 345.4 561.8 345.0 561.9 347.5C562.0 350.0 560.9 351.2 560.6 357.5C560.4 363.8 560.3 380.4 560.2 385.0M530.0 318.1a3.8 3.8 0 1 0 7.5 0a3.8 3.8 0 1 0 -7.5 0ZM528.8 311.2C529.0 310.0 528.5 306.0 530.0 303.8C531.5 301.5 535.2 297.9 537.5 297.5C539.8 297.1 542.5 299.4 543.8 301.2C545.0 303.1 545.6 306.7 545.0 308.8C544.4 310.8 540.8 312.9 540.0 313.8M533.1 308.1C533.6 307.4 535.1 304.1 536.2 303.8C537.4 303.4 539.9 305.0 540.2 306.0C540.6 307.0 538.9 309.3 538.1 309.8C537.4 310.2 536.0 308.7 535.6 308.5M530.1 310.6a1.1 1.1 0 1 0 2.2 0a1.1 1.1 0 1 0 -2.2 0ZM538.8 300.2a1.0 1.0 0 1 0 2.0 0a1.0 1.0 0 1 0 -2.0 0ZM530.0 316.2C528.5 315.8 524.4 314.0 521.2 313.8C518.1 313.5 513.8 314.4 511.2 315.0C508.8 315.6 506.2 316.5 506.2 317.5C506.2 318.5 509.2 320.0 511.2 321.2C513.3 322.5 516.0 324.9 518.8 325.0C521.5 325.1 526.0 322.4 527.5 321.9M512.5 318.1C513.2 318.4 515.4 320.1 516.9 320.0C518.3 319.9 520.8 318.2 521.2 317.5C521.7 316.8 519.7 315.9 519.4 315.6M509.8 317.8a0.9 0.9 0 1 0 1.8 0a0.9 0.9 0 1 0 -1.8 0ZM522.8 320.0a1.0 1.0 0 1 0 2.0 0a1.0 1.0 0 1 0 -2.0 0ZM538.8 316.2C540.0 315.8 543.8 313.5 546.2 313.8C548.8 314.0 551.6 315.2 553.8 317.5C555.9 319.8 558.3 325.4 559.4 327.5C560.4 329.6 561.4 329.2 560.0 330.0C558.6 330.8 554.2 332.5 551.2 332.5C548.3 332.5 544.4 331.7 542.5 330.0C540.6 328.3 540.4 323.8 540.0 322.5M543.8 320.0C544.5 320.0 547.1 319.2 548.1 320.0C549.2 320.8 550.3 323.7 550.0 325.0C549.7 326.3 547.3 327.6 546.2 327.8C545.2 327.9 544.2 326.0 543.8 325.6M554.0 327.8a1.2 1.2 0 1 0 2.5 0a1.2 1.2 0 1 0 -2.5 0ZM531.2 321.9C530.0 322.8 525.6 324.9 523.8 327.5C521.9 330.1 520.4 334.2 520.0 337.5C519.6 340.8 520.2 345.0 521.2 347.5C522.3 350.0 524.2 352.9 526.2 352.5C528.3 352.1 531.7 347.9 533.8 345.0C535.8 342.1 538.0 338.3 538.8 335.0C539.5 331.7 538.5 327.2 538.1 325.0C537.7 322.8 536.6 322.4 536.2 321.9M527.5 326.2C527.0 327.9 524.4 333.3 524.4 336.2C524.4 339.2 526.4 342.7 527.5 343.8C528.6 344.8 530.6 342.7 531.2 342.5M533.1 328.1a1.5 1.5 0 1 0 3.0 0a1.5 1.5 0 1 0 -3.0 0ZM530.1 336.2a1.9 1.9 0 1 0 3.8 0a1.9 1.9 0 1 0 -3.8 0ZM507.5 327.5C507.4 328.5 506.0 332.0 506.9 333.8C507.7 335.5 510.3 338.5 512.5 338.1C514.7 337.7 518.8 332.4 520.0 331.2M519.8 331.2 L508.8 329.4M519.8 331.2 L510.6 334.4M519.8 331.2 L515.0 336.9M540.0 333.8C540.2 335.0 539.8 339.6 541.2 341.2C542.7 342.9 546.9 344.8 548.8 343.8C550.6 342.7 551.9 336.5 552.5 335.0M540.6 332.5 L541.9 339.4M540.6 332.5 L545.0 343.1M540.6 332.5 L550.0 341.9M506.2 302.5C506.5 303.8 506.0 308.1 507.5 310.0C509.0 311.9 511.9 313.5 515.0 313.8C518.1 314.0 524.4 311.7 526.2 311.2M506.2 302.5C507.1 301.7 508.8 297.1 511.2 297.5C513.8 297.9 518.5 302.5 521.2 305.0C524.0 307.5 526.5 311.2 527.5 312.5M508.8 298.8C509.8 298.3 512.7 296.0 515.0 296.2C517.3 296.5 520.2 298.1 522.5 300.0C524.8 301.9 527.7 306.2 528.8 307.5M545.0 302.5C545.8 302.1 548.1 300.0 550.0 300.0C551.9 300.0 554.7 301.0 556.2 302.5C557.8 304.0 558.9 307.7 559.4 308.8M546.2 307.5C547.1 307.2 549.6 305.4 551.2 305.6C552.9 305.8 555.1 307.2 556.2 308.8C557.4 310.3 557.8 314.0 558.1 315.0M548.8 310.0C549.4 310.2 551.7 310.4 552.5 311.2C553.3 312.1 553.5 314.4 553.8 315.0M531.2 353.8C529.4 355.6 528.5 361.5 528.8 365.0C529.0 368.5 530.0 372.1 532.5 375.0C535.0 377.9 540.0 382.5 543.8 382.5C547.5 382.5 552.7 377.9 555.0 375.0C557.3 372.1 558.3 367.9 557.5 365.0C556.7 362.1 552.9 359.4 550.0 357.5C547.1 355.6 543.1 354.4 540.0 353.8C536.9 353.1 533.1 351.9 531.2 353.8ZM532.5 355.0C534.2 357.3 539.2 364.4 542.5 368.8C545.8 373.1 550.8 379.2 552.5 381.2M536.2 360.0 L547.5 358.8M539.4 365.0 L553.8 364.4M543.1 370.0 L556.2 371.2M536.9 361.2 L531.2 368.8M541.2 367.5 L536.2 377.5M560.0 343.8C559.0 342.9 556.5 343.5 555.0 345.0C553.5 346.5 551.5 349.8 551.2 352.5C551.0 355.2 552.6 360.4 553.8 361.2C554.9 362.1 556.9 359.4 558.1 357.5C559.4 355.6 560.9 352.3 561.2 350.0C561.6 347.7 561.0 344.6 560.0 343.8ZM558.8 345.0C558.1 346.5 555.7 351.1 555.0 353.8C554.3 356.4 554.5 359.5 554.4 360.6M508.8 338.8C509.0 340.8 509.0 348.1 510.0 351.2C511.0 354.4 512.9 356.9 515.0 357.5C517.1 358.1 521.2 355.4 522.5 355.0M511.9 342.5C512.2 343.8 512.6 348.2 513.8 350.0C514.9 351.8 517.9 352.6 518.8 353.1M508.8 360.0C509.8 360.8 512.7 364.4 515.0 365.0C517.3 365.6 520.4 365.0 522.5 363.8C524.6 362.5 526.2 359.2 527.5 357.5C528.8 355.8 529.6 354.4 530.0 353.8M508.8 370.0C510.4 370.4 515.8 371.2 518.8 372.5C521.7 373.8 524.8 375.4 526.2 377.5C527.7 379.6 527.3 383.8 527.5 385.0M511.2 376.2C512.2 376.9 516.0 378.5 516.9 380.0C517.7 381.5 516.4 384.2 516.2 385.0M527.5 357.5C527.3 359.2 525.8 364.2 526.2 367.5C526.7 370.8 529.6 374.6 530.0 377.5C530.4 380.4 529.0 383.8 528.8 385.0M555.0 365.0C555.7 365.8 558.5 367.5 559.4 370.0C560.2 372.5 559.9 378.3 560.0 380.0M535.0 376.2C535.2 377.3 536.5 381.0 536.2 382.5C536.0 384.0 534.2 384.6 533.8 385.0M510.0 297.5C510.4 298.8 511.0 302.9 512.5 305.0C514.0 307.1 517.7 309.2 518.8 310.0M513.8 296.9C514.3 297.8 515.4 300.6 516.9 302.5C518.4 304.4 521.8 307.2 522.8 308.1M518.8 298.8C519.3 299.4 520.6 300.8 521.9 302.5C523.1 304.2 525.5 307.7 526.2 308.8M527.5 295.0C528.1 295.6 529.6 298.3 531.2 298.8C532.9 299.2 536.5 297.7 537.5 297.5M511.2 331.2C511.4 331.9 511.2 334.1 511.9 335.0C512.5 335.9 514.5 336.6 515.0 336.9M514.4 345.6C514.8 346.5 515.7 349.6 516.9 350.6C518.0 351.7 520.5 351.7 521.2 351.9M510.0 365.0C511.1 365.6 514.8 368.2 516.9 368.8C519.0 369.3 521.8 368.2 522.8 368.1M537.5 360.6C536.8 362.2 533.5 367.6 533.1 370.0C532.7 372.4 534.7 374.2 535.0 375.0M542.5 370.0C543.5 370.8 547.1 373.1 548.8 375.0C550.4 376.9 551.9 380.2 552.5 381.2M556.2 332.5C556.0 333.3 555.6 335.8 555.0 337.5C554.4 339.2 552.9 341.7 552.5 342.5M545.0 332.5C544.8 333.5 544.6 338.8 543.8 338.8C542.9 338.8 540.6 333.5 540.0 332.5M519.4 377.5C519.9 378.1 522.2 380.0 522.5 381.2C522.8 382.5 521.5 384.4 521.2 385.0M559.7 375.0C559.6 377.4 559.4 384.0 559.3 389.6C559.1 395.2 559.7 402.2 558.7 408.5C557.6 414.9 555.5 422.6 553.1 427.5C550.7 432.4 546.9 434.3 544.4 437.7C541.8 441.1 540.5 444.5 537.8 447.9C535.1 451.3 531.9 455.0 528.3 458.1C524.8 461.3 521.0 464.8 516.7 466.9C512.3 468.9 506.9 469.7 502.1 470.5C497.2 471.4 492.4 471.7 487.5 472.0C482.6 472.3 477.8 473.0 472.9 472.4C468.1 471.8 463.7 470.0 458.3 468.3C453.0 466.7 445.9 464.8 440.8 462.5C435.7 460.2 431.5 458.1 427.7 454.5C423.9 450.8 421.0 445.1 418.2 440.6C415.4 436.1 412.2 429.7 410.9 427.5M410.9 427.5C411.5 428.5 412.8 431.1 414.6 433.3C416.4 435.5 419.4 437.7 421.9 440.6C424.3 443.5 427.0 447.4 429.2 450.8C431.4 454.2 432.8 459.0 435.0 461.0C437.2 463.1 441.1 462.9 442.3 463.2M410.9 427.5C412.0 428.0 415.2 428.7 417.5 430.4C419.8 432.1 422.5 434.1 424.8 437.7C427.1 441.4 429.2 448.4 431.4 452.3C433.5 456.2 436.8 459.6 437.9 461.0M416.8 434.8C416.6 432.8 415.8 427.0 416.0 423.1C416.3 419.2 417.0 414.6 418.2 411.5C419.4 408.3 421.5 405.9 423.3 404.2C425.2 402.5 428.2 401.7 429.2 401.3M429.2 401.3C429.5 402.5 431.4 405.6 431.4 408.5C431.4 411.5 430.0 415.6 429.2 418.8C428.3 421.9 427.0 424.8 426.3 427.5C425.5 430.2 425.0 433.6 424.8 434.8M419.0 410.0C419.9 409.7 422.8 408.2 424.8 408.0C426.7 407.8 429.7 408.7 430.6 408.8M417.2 415.1C418.3 414.8 421.5 413.3 423.7 413.1C425.9 412.9 429.1 413.8 430.2 413.9M416.5 420.2C417.5 419.9 420.6 418.4 422.6 418.2C424.6 418.0 427.7 418.9 428.7 419.0M416.3 425.3C417.2 425.0 419.9 423.5 421.7 423.3C423.4 423.1 426.1 424.0 427.0 424.1M416.5 430.4C417.2 430.1 419.5 428.6 421.0 428.4C422.5 428.2 424.8 429.1 425.5 429.3M429.2 401.3C429.9 399.8 431.8 393.2 433.5 392.5C435.2 391.8 437.9 394.7 439.4 396.9C440.8 399.1 441.8 402.7 442.3 405.6C442.8 408.5 443.3 412.2 442.3 414.4C441.3 416.6 438.6 417.3 436.5 418.8C434.3 420.2 430.7 421.4 429.2 423.1C427.6 424.8 427.3 428.0 427.0 429.0M433.8 394.0C433.7 396.4 433.8 403.4 432.8 408.5C431.8 413.6 428.6 421.9 427.7 424.6M433.3 401.3 L441.6 399.8M433.3 406.4 L441.6 404.9M433.3 411.5 L441.6 410.0M433.3 416.6 L441.6 415.1M407.4 394.0a6.4 6.4 0 1 0 12.8 0a6.4 6.4 0 1 0 -12.8 0ZM420.7 391.3a4.8 4.8 0 1 0 9.6 0a4.8 4.8 0 1 0 -9.6 0ZM408.0 408.3a5.8 5.8 0 1 0 11.7 0a5.8 5.8 0 1 0 -11.7 0ZM410.2 391.0C411.2 392.0 414.5 395.2 416.0 396.9C417.6 398.6 419.1 400.5 419.7 401.3M411.7 410.7C412.5 409.9 415.4 407.2 416.8 405.6C418.1 404.0 418.4 403.0 419.7 401.3C421.0 399.5 423.9 396.4 424.8 395.4M443.8 399.8C444.0 398.6 443.5 394.3 445.2 392.5C446.9 390.7 450.6 389.3 454.0 388.9C457.4 388.4 462.5 388.5 465.6 389.6C468.8 390.7 471.2 393.2 472.9 395.4C474.6 397.6 475.3 401.5 475.8 402.7M454.0 397.6C454.7 397.5 457.4 396.1 458.3 396.9C459.3 397.6 460.3 400.4 459.8 402.0C459.3 403.6 457.4 405.9 455.4 406.4C453.5 406.8 450.1 406.0 448.1 404.9C446.2 403.8 444.5 400.6 443.8 399.8M459.8 410.0C460.8 409.4 463.2 407.2 465.6 406.4C468.1 405.5 472.7 405.5 474.4 404.9C476.1 404.3 475.6 403.1 475.8 402.7M459.8 410.0C460.0 410.7 459.8 413.6 461.3 414.4C462.7 415.1 466.4 415.3 468.5 414.4C470.7 413.4 473.2 410.4 474.4 408.5C475.6 406.7 475.6 404.3 475.8 403.4M455.4 396.9C456.4 396.4 459.1 394.2 461.3 394.0C463.4 393.7 466.6 394.3 468.5 395.4C470.5 396.5 472.2 399.7 472.9 400.5M436.5 391.0C437.7 390.8 441.6 389.6 443.8 389.6C445.9 389.6 448.6 390.8 449.6 391.0M442.3 414.4C442.8 413.2 444.0 408.4 445.2 407.1C446.4 405.7 448.5 405.4 449.6 406.4C450.7 407.3 451.4 411.8 451.8 412.9M475.8 402.7C476.4 403.7 477.8 406.6 479.5 408.5C481.2 410.5 483.2 412.9 486.0 414.4C488.8 415.8 492.7 417.0 496.3 417.3C499.8 417.5 504.8 417.3 507.2 415.8C509.6 414.4 510.0 411.7 510.8 408.5C511.7 405.4 512.5 401.0 512.3 396.9C512.1 392.7 509.9 387.4 509.4 383.8C508.9 380.1 509.4 376.5 509.4 375.0M445.9 431.1C446.1 432.5 445.3 437.1 446.7 439.2C448.0 441.2 451.0 443.3 454.0 443.5C456.9 443.8 461.6 442.6 464.2 440.6C466.7 438.7 468.8 435.0 469.3 431.9C469.8 428.7 468.9 424.3 467.1 421.7C465.3 419.0 461.7 416.8 458.3 415.8C454.9 414.9 450.3 415.3 446.7 415.8C443.0 416.3 439.4 417.0 436.5 418.8C433.5 420.5 430.7 423.1 429.2 426.0C427.6 429.0 427.0 432.6 427.0 436.3C427.0 439.9 427.8 444.5 429.2 447.9C430.5 451.3 432.8 454.2 435.0 456.7C437.2 459.1 441.1 461.5 442.3 462.5M445.9 431.1C445.6 432.0 444.1 433.9 443.8 436.3C443.4 438.6 443.0 442.1 443.8 445.0C444.5 447.9 445.9 451.1 448.1 453.8C450.3 456.4 453.5 458.9 456.9 461.0C460.3 463.2 464.4 465.4 468.5 466.9C472.7 468.3 477.5 469.3 481.7 469.8C485.8 470.3 491.4 469.8 493.3 469.8M463.4 446.5C462.5 447.9 464.0 453.5 465.6 456.7C467.2 459.8 470.6 463.6 472.9 465.4C475.2 467.2 477.9 468.6 479.5 467.6C481.1 466.6 482.5 462.1 482.4 459.6C482.3 457.0 480.6 454.2 478.8 452.3C476.9 450.3 474.0 448.9 471.5 447.9C468.9 446.9 464.4 445.0 463.4 446.5ZM465.6 447.9C466.8 449.6 470.6 455.0 472.9 458.1C475.2 461.3 478.4 465.4 479.5 466.9M472.9 427.5C471.5 426.4 476.3 420.6 478.8 418.8C481.2 416.9 485.3 416.3 487.5 416.6C489.7 416.8 491.9 418.8 491.9 420.2C491.9 421.7 490.7 424.1 487.5 425.3C484.3 426.5 474.4 428.6 472.9 427.5ZM472.9 427.5C474.4 426.8 478.5 424.3 481.7 423.1C484.8 421.9 490.2 420.7 491.9 420.2M464.2 418.8C465.1 418.5 468.1 418.0 470.0 417.3C471.9 416.6 474.9 414.9 475.8 414.4M472.9 427.5C475.8 427.4 484.5 427.4 490.4 426.8C496.4 426.2 505.6 424.3 508.6 423.9M478.8 429.7C478.9 431.5 478.8 437.1 479.5 440.6C480.2 444.2 481.5 448.4 483.1 450.8C484.7 453.3 486.8 455.0 489.0 455.2C491.1 455.5 493.1 453.8 496.3 452.3C499.4 450.8 503.8 448.0 507.9 446.5C512.1 444.9 518.9 443.4 521.0 442.8M491.9 437.0C494.6 438.0 503.1 441.8 507.9 442.8C512.8 443.8 518.9 442.8 521.0 442.8M528.3 388.1C527.4 389.6 524.1 393.0 522.5 396.9C520.9 400.8 518.1 407.8 518.9 411.5C519.6 415.1 524.3 417.8 526.9 418.8C529.4 419.7 532.6 419.0 534.2 417.3C535.7 415.6 534.8 411.9 536.4 408.5C537.9 405.1 542.4 398.8 543.6 396.9M528.3 388.1C529.6 388.9 533.1 391.0 535.6 392.5C538.2 394.0 542.3 396.1 543.6 396.9M528.3 396.9C528.7 398.3 529.7 402.9 530.5 405.6C531.3 408.3 532.6 411.9 533.0 413.2M557.5 388.9C555.3 390.2 548.0 393.6 544.4 396.9C540.7 400.2 537.0 404.2 535.6 408.5C534.3 412.9 535.3 419.2 536.4 423.1C537.5 427.0 539.4 431.1 542.2 431.9C545.0 432.6 551.3 428.2 553.1 427.5M540.7 415.8C540.9 414.6 540.4 410.4 541.5 408.5C542.6 406.7 545.4 405.1 547.3 404.9C549.2 404.7 552.4 405.0 553.1 407.1C553.9 409.2 552.9 414.1 551.7 417.3C550.5 420.5 546.8 424.6 545.8 426.0M508.6 412.2C506.5 413.8 509.7 419.6 510.8 423.1C511.9 426.7 513.0 430.4 515.2 433.3C517.4 436.3 521.5 439.3 524.0 440.6C526.4 442.0 527.6 442.6 529.8 441.4C532.0 440.1 535.6 435.9 537.1 433.3C538.5 430.8 539.0 428.7 538.5 426.0C538.1 423.4 536.6 419.4 534.2 417.3C531.7 415.2 528.2 414.5 524.0 413.6C519.7 412.8 510.8 410.6 508.6 412.2ZM516.7 426.0C516.7 424.8 515.7 420.3 516.7 418.8C517.6 417.2 520.3 416.1 522.5 416.6C524.7 417.0 528.3 419.4 529.8 421.7C531.3 424.0 531.0 429.0 531.3 430.4M516.7 426.0C517.9 426.0 522.0 424.8 524.0 426.0C525.9 427.3 527.6 432.1 528.3 433.3M541.2 435.5C542.0 436.4 542.2 438.1 541.8 439.6C541.4 441.0 540.1 442.9 538.8 444.0C537.5 445.1 535.4 446.0 533.9 446.2C532.5 446.3 530.8 445.8 530.0 444.9C529.3 444.0 529.0 442.2 529.4 440.8C529.8 439.4 531.1 437.5 532.4 436.4C533.8 435.3 535.9 434.3 537.3 434.2C538.8 434.0 540.5 434.6 541.2 435.5ZM484.6 463.2C486.3 461.7 490.7 456.5 494.8 453.8C498.9 451.0 503.8 447.9 509.4 446.5C515.0 445.0 524.7 444.8 528.3 445.0C532.0 445.2 531.5 446.0 531.3 447.9C531.0 449.9 529.3 453.8 526.9 456.7C524.4 459.6 520.8 463.1 516.7 465.4C512.5 467.7 504.5 469.7 502.1 470.5M484.6 463.2C486.3 464.1 491.9 467.1 494.8 468.3C497.7 469.6 500.9 470.2 502.1 470.5M505.0 461.0C505.2 460.3 504.8 457.8 506.5 456.7C508.2 455.6 512.3 455.0 515.2 454.5C518.1 454.0 521.7 454.5 524.0 453.8C526.3 453.0 528.2 450.7 529.1 450.1M505.0 461.0C505.5 461.5 506.0 463.7 507.9 464.0C509.9 464.2 514.0 463.7 516.7 462.5C519.3 461.3 522.7 457.6 524.0 456.7M510.8 408.5C511.6 407.8 513.8 403.7 515.2 404.2C516.7 404.7 518.9 410.2 519.6 411.5M518.9 411.5 L512.3 406.4M518.9 411.5 L515.2 404.9M518.9 411.5 L517.4 407.1M537.1 391.0C538.2 390.3 541.3 386.5 543.6 386.7C546.0 386.8 549.7 390.9 550.9 391.8M543.6 396.9 L538.5 390.3M543.6 396.9 L543.6 387.4M543.6 396.9 L548.8 390.3M513.0 391.0C513.4 389.6 513.9 384.7 515.2 382.3C516.5 379.9 520.1 377.4 521.0 376.5M531.3 379.4C532.7 380.3 537.1 384.5 540.0 385.2C542.9 385.9 546.0 385.2 548.8 383.8C551.5 382.3 555.4 377.7 556.8 376.5M510.8 401.3C511.6 399.1 513.0 391.5 515.2 388.1C517.4 384.7 521.8 383.0 524.0 380.8C526.1 378.6 527.6 376.0 528.3 375.0" fill="none" stroke="#262626" stroke-width="1" stroke-linecap="round" stroke-linejoin="round"/></svg>
<div class="a" style="left:944.4px;top:112.8px;width:3px;height:488.4px;background:#f0f0f0;"></div>
<div class="a" style="left:945.6px;top:112.8px;width:1.6px;height:532px;background:#fdfdfd;"></div>
<div class="a" style="left:929.2px;top:150px;width:15px;height:435px;background:#fff;"></div>
<div class="a" style="left:929.2px;top:150px;width:15px;height:17px;background:#f0f0f0;"></div>
<div class="a" style="left:929.2px;top:261.5px;width:15px;height:221px;background:#cdcdcd;"></div>
<div class="a" style="left:929.2px;top:567.6px;width:15px;height:18px;background:#f0f0f0;"></div>
<svg style="left:932.6px;top:156.4px" width="7.4" height="4.6" viewBox="0 0 7.4 4.6"><path d="M.6 4.2L3.7 1L6.8 4.2" fill="none" stroke="#333" stroke-width="1.3"/></svg>
<svg style="left:932.6px;top:573.4px" width="7.4" height="4.6" viewBox="0 0 7.4 4.6"><path d="M.6 .6L3.7 3.8L6.8 .6" fill="none" stroke="#333" stroke-width="1.3"/></svg>
<div class="a" style="left:46px;top:585.6px;width:901px;height:15.6px;background:#f0f0f0;"></div>
<div class="a" style="left:63.2px;top:585.8px;width:847px;height:15.2px;background:#cdcdcd;"></div>
<svg style="left:52px;top:589.6px" width="4.6" height="7.4" viewBox="0 0 4.6 7.4"><path d="M4 .6L.9 3.7L4 6.8" fill="none" stroke="#333" stroke-width="1.3"/></svg>
<svg style="left:917px;top:589.6px" width="4.6" height="7.4" viewBox="0 0 4.6 7.4"><path d="M.6 .6L3.7 3.7L.6 6.8" fill="none" stroke="#333" stroke-width="1.3"/></svg>
<svg style="left:930.4px;top:587.6px" width="12" height="12" viewBox="0 0 12 12"><circle cx="4.8" cy="4.8" r="4" fill="none" stroke="#555" stroke-width=".9"/><path d="M7.8 7.8L11.4 11.4" stroke="#444" stroke-width="1.3"/><path d="M4.8 2.4V7.2M2.4 4.8H7.2" stroke="#666" stroke-width=".7"/></svg>
<!-- s_tools -->
<div class="a" style="left:0px;top:113px;width:29px;height:532px;background:#f0f0f0;"></div>
<div class="a" style="left:4px;top:170.7px;width:21px;height:1px;background:#dddddd;"></div>
<div class="a" style="left:4px;top:230.5px;width:21px;height:1px;background:#dddddd;"></div>
<div class="a" style="left:4px;top:369px;width:21px;height:1px;background:#dddddd;"></div>
<div class="a" style="left:4px;top:402px;width:21px;height:1px;background:#dddddd;"></div>
<div class="a" style="left:4px;top:461.7px;width:21px;height:1px;background:#dddddd;"></div>
<div class="a" style="left:4px;top:520.8px;width:21px;height:1px;background:#dddddd;"></div>
<div class="a" style="left:4px;top:580px;width:21px;height:1px;background:#dddddd;"></div>
<div class="a" style="left:3.3px;top:116.6px;width:22.6px;height:22.2px;background:#fff;border:1px solid #d6d6d6"></div>
<svg style="left:10.6px;top:119.6px" width="10" height="17" viewBox="0 0 10 17"><path d="M.8 .6V12.6L3.6 10.2L6 15.8L8 14.9L5.7 9.5H9.2Z" fill="#2b2b2b"/></svg>
<svg style="left:21.6px;top:134.6px" width="4" height="4" viewBox="0 0 4 4"><path d="M4 0V4H0Z" fill="#828282"/></svg>
<svg style="left:8px;top:146px" width="19" height="19" viewBox="0 0 19 19"><path d="M3.6 .6Q-.4 8 4.6 16" fill="none" stroke="#2b2b2b" stroke-width="1.1"/><rect x="1" y="5" width="3.4" height="3.4" fill="#f0f0f0" stroke="#2b2b2b" stroke-width="1"/><path d="M8.2 9.6L15 12.6L10.8 16.2Z" fill="#2b2b2b"/></svg>
<svg style="left:21.6px;top:161.2px" width="4" height="4" viewBox="0 0 4 4"><path d="M4 0V4H0Z" fill="#828282"/></svg>
<svg style="left:6.6px;top:179px" width="16.6" height="16.6" viewBox="0 0 16.6 16.6"><path d="M4.4 0V9.6H16M0 4.4H11.2V16.6" fill="none" stroke="#2b2b2b" stroke-width="2"/></svg>
<svg style="left:21.6px;top:193.6px" width="4" height="4" viewBox="0 0 4 4"><path d="M4 0V4H0Z" fill="#828282"/></svg>
<svg style="left:5.6px;top:205.6px" width="18" height="18" viewBox="0 0 18 18"><circle cx="6.8" cy="6.8" r="5.8" fill="none" stroke="#2b2b2b" stroke-width="1.3"/><path d="M11 11L16 16" stroke="#2b2b2b" stroke-width="2.2"/></svg>
<svg style="left:21.6px;top:219.6px" width="4" height="4" viewBox="0 0 4 4"><path d="M4 0V4H0Z" fill="#828282"/></svg>
<svg style="left:6.6px;top:239px" width="18" height="17" viewBox="0 0 18 17"><path d="M3.4 0V6.4M.2 3.2H6.6" stroke="#2b2b2b" stroke-width="1.1"/><path d="M3.4 8.4V13.6Q4.6 15 5.8 12.2Q6.6 10.4 7.4 12.6Q8.2 14.6 9.2 12.6Q10 11 10.8 12.8Q11.8 14.8 12.8 12.8Q13.6 11.6 14.6 13" fill="none" stroke="#2b2b2b" stroke-width="1.1"/></svg>
<svg style="left:21.6px;top:252.2px" width="4" height="4" viewBox="0 0 4 4"><path d="M4 0V4H0Z" fill="#828282"/></svg>
<svg style="left:6.6px;top:264.6px" width="17" height="17" viewBox="0 0 17 17"><path d="M15.4 1.6Q14 .2 12.6 1.6L7.4 8.4L9.8 10.8L16 5Q17 3.4 15.4 1.6Z" fill="#2b2b2b"/><path d="M6.4 9.4Q3 9.6 2.8 12.4Q2.6 14.4 .2 15.6Q4.4 17.2 7.2 15.2Q9.8 13.2 8.8 11.6Z" fill="#2b2b2b"/></svg>
<svg style="left:21.6px;top:279.2px" width="4" height="4" viewBox="0 0 4 4"><path d="M4 0V4H0Z" fill="#828282"/></svg>
<svg style="left:6.6px;top:292px" width="16" height="15.4" viewBox="0 0 16 15.4"><rect x=".65" y=".65" width="14.6" height="14" fill="none" stroke="#2b2b2b" stroke-width="1.3"/></svg>
<svg style="left:21.6px;top:305.6px" width="4" height="4" viewBox="0 0 4 4"><path d="M4 0V4H0Z" fill="#828282"/></svg>
<svg style="left:6.6px;top:318.8px" width="16" height="16" viewBox="0 0 16 16"><circle cx="8" cy="8" r="7.3" fill="none" stroke="#2b2b2b" stroke-width="1.3"/></svg>
<svg style="left:21.6px;top:332.2px" width="4" height="4" viewBox="0 0 4 4"><path d="M4 0V4H0Z" fill="#828282"/></svg>
<svg style="left:6.6px;top:345.2px" width="16" height="15.8" viewBox="0 0 16 15.8"><path d="M4.2 .7H11.8L15.4 7.9L11.8 15.1H4.2L.6 7.9Z" fill="none" stroke="#2b2b2b" stroke-width="1.3"/></svg>
<svg style="left:21.6px;top:359.2px" width="4" height="4" viewBox="0 0 4 4"><path d="M4 0V4H0Z" fill="#828282"/></svg>
<div class="t" style="left:6.2px;top:372.6px;font-size:22px;color:#2b2b2b;">A</div>
<svg style="left:21.6px;top:391.2px" width="4" height="4" viewBox="0 0 4 4"><path d="M4 0V4H0Z" fill="#828282"/></svg>
<svg style="left:6.6px;top:410.4px" width="17" height="17" viewBox="0 0 17 17"><path d="M2.6 14.6L14.2 3" stroke="#2b2b2b" stroke-width="1.2"/><path d="M.4 12.2L5 16.8M11.8 .6L16.6 5.4" stroke="#2b2b2b" stroke-width="1.2"/></svg>
<svg style="left:21.6px;top:424.2px" width="4" height="4" viewBox="0 0 4 4"><path d="M4 0V4H0Z" fill="#828282"/></svg>
<svg style="left:6.8px;top:437px" width="18" height="17" viewBox="0 0 18 17"><path d="M2.6 3.2L13.6 12.6" stroke="#2b2b2b" stroke-width="1.3"/><rect x=".5" y=".8" width="4.2" height="4.2" fill="#e88a2a" stroke="#8a4a10" stroke-width=".9"/><rect x="11.4" y="10.4" width="4.2" height="4.2" fill="#e88a2a" stroke="#8a4a10" stroke-width=".9"/></svg>
<svg style="left:21.6px;top:450.2px" width="4" height="4" viewBox="0 0 4 4"><path d="M4 0V4H0Z" fill="#828282"/></svg>
<svg style="left:7px;top:469.4px" width="16" height="17" viewBox="0 0 16 17"><path d="M3.6 14.2H14.4V3.6" fill="none" stroke="#2b2b2b" stroke-width="2.2"/><rect x=".6" y=".6" width="11" height="11" fill="#f4f4f4" stroke="#2b2b2b" stroke-width="1.2"/></svg>
<svg style="left:21.6px;top:484.2px" width="4" height="4" viewBox="0 0 4 4"><path d="M4 0V4H0Z" fill="#828282"/></svg>
<svg style="left:7px;top:496.8px" width="15.7" height="15.7" viewBox="0 0 15.7 15.7"><rect x="0" y="0" width="15.7" height="15.7" fill="#2b2b2b"/><rect x="1.1" y="1.1" width="2.7" height="2.7" fill="#fff"/><rect x="6.5" y="1.1" width="2.7" height="2.7" fill="#fff"/><rect x="11.9" y="1.1" width="2.7" height="2.7" fill="#fff"/><rect x="3.8" y="3.8" width="2.7" height="2.7" fill="#fff"/><rect x="9.2" y="3.8" width="2.7" height="2.7" fill="#fff"/><rect x="1.1" y="6.5" width="2.7" height="2.7" fill="#fff"/><rect x="6.5" y="6.5" width="2.7" height="2.7" fill="#fff"/><rect x="11.9" y="6.5" width="2.7" height="2.7" fill="#fff"/><rect x="3.8" y="9.2" width="2.7" height="2.7" fill="#fff"/><rect x="9.2" y="9.2" width="2.7" height="2.7" fill="#fff"/><rect x="1.1" y="11.9" width="2.7" height="2.7" fill="#fff"/><rect x="6.5" y="11.9" width="2.7" height="2.7" fill="#fff"/><rect x="11.9" y="11.9" width="2.7" height="2.7" fill="#fff"/></svg>
<svg style="left:6.4px;top:529.6px" width="17" height="17" viewBox="0 0 17 17"><path d="M11.4 2.2Q13.6 -.6 15.6 1.4Q17.6 3.4 14.8 5.6L15.4 6.8L13.6 8.6L8.4 3.4L10.2 1.6Z" fill="#2b2b2b"/><path d="M9.4 5.2L2.4 12.2L1.2 15.4L1.8 16L4.8 14.6L11.8 7.6" fill="#f0f0f0" stroke="#2b2b2b" stroke-width="1.1"/><path d="M3 12.4L1.4 15.6L4.6 14.2Z" fill="#c46a2a"/><path d="M2.6 12L4.8 14.2" stroke="#c46a2a" stroke-width="1.6"/></svg>
<svg style="left:21.6px;top:543.8px" width="4" height="4" viewBox="0 0 4 4"><path d="M4 0V4H0Z" fill="#828282"/></svg>
<svg style="left:6.6px;top:556px" width="18" height="18" viewBox="0 0 18 18"><path d="M7.2 .8L14.4 8L7.6 14.8L.8 8Z" fill="#fff" stroke="#2b2b2b" stroke-width="1.3" stroke-linejoin="round"/><path d="M7.2 .8L10 3.6" stroke="#2b2b2b" stroke-width="2.4"/><path d="M3 8.4H12.4L7.6 13.2Z" fill="#d8262c"/><path d="M15.2 8.6Q17.6 12 15.2 13Q12.8 12 15.2 8.6Z" fill="#2b2b2b"/></svg>
<svg style="left:21.2px;top:569.2px" width="3.8" height="3.8" viewBox="0 0 3.8 3.8"><path d="M3.8 0V3.8H0Z" fill="#d8262c"/></svg>
<svg style="left:6px;top:588px" width="18" height="19" viewBox="0 0 18 19"><path d="M.6 14.6Q5.4 17.6 9 13.6Q12.2 9.6 11.6 3.4Q15.4 5.6 15.6 10.8Q15.4 17.6 8.6 18.4Q3.4 18.6 .6 14.6Z" fill="#2b2b2b"/><circle cx="10.8" cy="5.4" r="3.1" fill="#f0f0f0" stroke="#2b2b2b" stroke-width="1.1"/><path d="M7.6 8.6L15.4 1.2" stroke="#2b2b2b" stroke-width="1.2"/></svg>
<svg style="left:9px;top:627.8px" width="11" height="11" viewBox="0 0 11 11"><path d="M5.5 0V11M0 5.5H11" stroke="#b4b4b4" stroke-width="1.5"/></svg>
<!-- s_docker -->
<div class="a" style="left:947px;top:112.8px;width:333px;height:532.2px;background:#f0f0f0;"></div>
<div class="a" style="left:948px;top:112.8px;width:311.5px;height:22.4px;background:#e4e4e4;"></div>
<div class="t" style="left:953.6px;top:118.9px;font-size:10.5px;letter-spacing:-0.264px;color:#2a2a2a;">Text</div>
<svg style="left:1223.6px;top:120.2px" width="11.4" height="8" viewBox="0 0 11.4 8"><path d="M0 0L5.4 4L0 8ZM5.8 0L11.2 4L5.8 8Z" fill="#b7b7b7"/></svg>
<svg style="left:1242.8px;top:119.8px" width="11" height="9.6" viewBox="0 0 11 9.6"><path d="M.6 .4L10.4 9.2M10.4 .4L.6 9.2" stroke="#b7b7b7" stroke-width="1.5"/></svg>
<div class="a" style="left:948px;top:135.2px;width:291px;height:26.2px;background:#dedede;"></div>
<div class="a" style="left:948px;top:135.2px;width:291px;height:1px;background:#d0d0d0;"></div>
<div class="a" style="left:949.3px;top:137px;width:21.2px;height:21.8px;background:#fff;"></div>
<div class="t" style="left:951.2px;top:136.4px;font-size:21.5px;color:#2b2b2b;">A</div>
<svg style="left:976px;top:141.2px" width="16" height="15.4" viewBox="0 0 16 15.4"><path d="M0 0.6H16M0 3.0H16M0 5.3H16M0 7.7H16M0 10.0H16M0 12.3H16M0 14.7H8" stroke="#333" stroke-width="1.2"/></svg>
<svg style="left:1000px;top:140.4px" width="16" height="15.6" viewBox="0 0 16 15.6"><rect x="1.2" y="1.2" width="13.6" height="13.2" fill="none" stroke="#333" stroke-width="1.2"/><g fill="#333"><rect x="0" y="0" width="2.2" height="2.2"/><rect x="7" y="0" width="2" height="2"/><rect x="13.8" y="0" width="2.2" height="2.2"/><rect x="0" y="6.8" width="2" height="2"/><rect x="14" y="6.8" width="2" height="2"/><rect x="0" y="13.4" width="2.2" height="2.2"/><rect x="7" y="13.6" width="2" height="2"/><rect x="13.8" y="13.4" width="2.2" height="2.2"/></g></svg>
<svg style="left:1191px;top:141.2px" width="16.6" height="14.8" viewBox="0 0 16.6 14.8"><path d="M2.4 .7H14.2" stroke="#333" stroke-width="1.4"/><path d="M.7 3V14.1H15.9V3" fill="none" stroke="#333" stroke-width="1.3"/><path d="M.7 3.4L2.4 .7M15.9 3.4L14.2 .7" stroke="#333" stroke-width="1.2"/><path d="M8.3 4V9" stroke="#333" stroke-width="1.8"/><path d="M5.2 8H11.4L8.3 11.6Z" fill="#333"/></svg>
<div class="a" style="left:1215px;top:137px;width:22.4px;height:22px;background:#fff;"></div>
<svg style="left:1219px;top:140px" width="15.6" height="15.6" viewBox="0 0 15.6 15.6"><path d="M8.4 2.4H.7V14.9H14V8" fill="none" stroke="#333" stroke-width="1.3"/><ellipse cx="11.8" cy="2.4" rx="3.3" ry="2" fill="#fff" stroke="#444" stroke-width=".9"/><circle cx="11.8" cy="2.4" r="1" fill="#444"/></svg>
<div class="a" style="left:1221.3px;top:161.4px;width:17.4px;height:483.6px;background:#f0f0f0;"></div>
<div class="a" style="left:1221.3px;top:177.5px;width:17.4px;height:427.5px;background:#cdcdcd;"></div>
<svg style="left:1226.4px;top:167.4px" width="8" height="5" viewBox="0 0 8 5"><path d="M.6 4.6L4 1.2L7.4 4.6" fill="none" stroke="#333" stroke-width="1.5"/></svg>
<svg style="left:1226.4px;top:634.2px" width="8" height="5" viewBox="0 0 8 5"><path d="M.6 .6L4 4L7.4 .6" fill="none" stroke="#333" stroke-width="1.5"/></svg>
<svg style="left:957px;top:171.6px" width="7.2" height="3.2"><path d="M0 3.2H7.2L3.6 0Z" fill="#777"/></svg>
<div class="t" style="left:974.0px;top:167.6px;font-size:10.8px;letter-spacing:-0.269px;color:#1a1a1a;font-weight:bold;">Character</div>
<div class="a" style="left:1208.8px;top:169px;width:7px;height:6.8px;background:#fff;border:1px solid #e6e6e6"></div>
<div class="a" style="left:951.4px;top:188.5px;width:168px;height:22.2px;background:#fff;border:1px solid #cbcbcb"></div>
<div class="a" style="left:1100px;top:189.5px;width:18.4px;height:20.2px;background:#e1e1e1;border-left:1px solid #d4d4d4"></div>
<svg style="left:1105.5px;top:197.9px" width="7.4" height="3.8"><path d="M0 0H7.4L3.7 3.8Z" fill="#666"/></svg>
<div class="t" style="left:955.6px;top:193.5px;font-size:10.5px;letter-spacing:-0.121px;color:#2a2a2a;">Arial</div>
<div class="a" style="left:1125.4px;top:195.8px;width:7px;height:6.8px;background:#fff;border:1px solid #e6e6e6"></div>
<div class="a" style="left:1138.6px;top:188.5px;width:64px;height:22.2px;background:#fff;border:1px solid #cbcbcb"></div>
<div class="a" style="left:1183.6px;top:189.5px;width:18px;height:20.2px;background:#e1e1e1;border-left:1px solid #d4d4d4"></div>
<svg style="left:1189.9px;top:193.55px" width="5.4" height="2.7"><path d="M0 2.7H5.4L2.7 0Z" fill="#858585"/></svg>
<svg style="left:1189.9px;top:203.15px" width="5.4" height="2.7"><path d="M0 0H5.4L2.7 2.7Z" fill="#858585"/></svg>
<div class="t" style="left:1143.8px;top:193.5px;font-size:10.5px;letter-spacing:-0.158px;color:#2a2a2a;">12.0 pt</div>
<div class="a" style="left:1208.8px;top:195.8px;width:7px;height:6.8px;background:#fff;border:1px solid #e6e6e6"></div>
<div class="a" style="left:951.2px;top:215.2px;width:168.2px;height:22.2px;background:#e1e1e1;border:1px solid #cbcbcb"></div>
<div class="t" style="left:955.8px;top:220.4px;font-size:10.5px;letter-spacing:0.094px;color:#2a2a2a;">Normal</div>
<svg style="left:1106.7px;top:224.5px" width="7.4" height="3.8"><path d="M0 0H7.4L3.7 3.8Z" fill="#666"/></svg>
<div class="a" style="left:1125.4px;top:222.6px;width:7px;height:6.8px;background:#fff;border:1px solid #e6e6e6"></div>
<div class="t" style="left:1183.4px;top:217.6px;font-size:12.5px;letter-spacing:-0.138px;color:#c9c9c9;">AA</div>
<svg style="left:1184px;top:232.4px" width="16" height="4" viewBox="0 0 16 4"><path d="M0 2H15" stroke="#c9c9c9" stroke-width="1"/><circle cx="4" cy="2" r="1.4" fill="#f0f0f0" stroke="#c9c9c9" stroke-width=".8"/></svg>
<svg style="left:1198px;top:234px" width="3" height="3" viewBox="0 0 3 3"><path d="M3 0V3H0Z" fill="#ccc"/></svg>
<div class="a" style="left:1208.8px;top:222.6px;width:7px;height:6.8px;background:#fff;border:1px solid #e6e6e6"></div>
<div class="t" style="left:950.4px;top:253.7px;font-size:11.5px;letter-spacing:0.556px;color:#333;">AV</div>
<svg style="left:950.6px;top:251.6px" width="16" height="16" viewBox="0 0 16 16"><path d="M1 1.4H7M1 1.4L2.6 .2M1 1.4L2.6 2.6" stroke="#333" stroke-width=".9" fill="none"/><path d="M9 15H15.6M15.6 15L14 13.8M15.6 15L14 16.2" stroke="#333" stroke-width=".9" fill="none"/></svg>
<div class="a" style="left:970.4px;top:248.6px;width:149px;height:22.6px;background:#f3f3f3;border:1px solid #dedede"></div>
<div class="a" style="left:1100px;top:249.6px;width:18.4px;height:20.6px;background:#f0f0f0;border-left:1px solid #e2e2e2"></div>
<svg style="left:1106.5px;top:253.65px" width="5.4" height="2.7"><path d="M0 2.7H5.4L2.7 0Z" fill="#d2d2d2"/></svg>
<svg style="left:1106.5px;top:263.65px" width="5.4" height="2.7"><path d="M0 0H5.4L2.7 2.7Z" fill="#d2d2d2"/></svg>
<div class="a" style="left:1125.4px;top:256.6px;width:7px;height:6.8px;background:#fff;border:1px solid #e6e6e6"></div>
<div class="t" style="left:1183.8px;top:248.5px;font-size:17px;letter-spacing:1.123px;color:#333;">U</div>
<div class="a" style="left:1184.6px;top:267.4px;width:12.6px;height:1.3px;background:#333;"></div>
<svg style="left:1198.4px;top:267px" width="3.2" height="3.2" viewBox="0 0 3.2 3.2"><path d="M3.2 0V3.2H0Z" fill="#777"/></svg>
<div class="a" style="left:1208.8px;top:256.6px;width:7px;height:6.8px;background:#fff;border:1px solid #e6e6e6"></div>
<div class="a" style="left:970.4px;top:275.3px;width:149px;height:22.2px;background:#e1e1e1;border:1px solid #cbcbcb"></div>
<div class="t" style="left:974.4px;top:280.9px;font-size:10.5px;letter-spacing:0.076px;color:#2a2a2a;">Uniform Fill</div>
<svg style="left:1106.7px;top:284.7px" width="7.4" height="3.8"><path d="M0 0H7.4L3.7 3.8Z" fill="#666"/></svg>
<div class="a" style="left:1123.3px;top:275.3px;width:52.4px;height:22.2px;background:#fff;border:1px solid #cbcbcb"></div>
<div class="a" style="left:1157.6px;top:276.3px;width:17.1px;height:20.2px;background:#e1e1e1;border-left:1px solid #d4d4d4"></div>
<svg style="left:1162.9px;top:284.8px" width="7.4" height="3.8"><path d="M0 0H7.4L3.7 3.8Z" fill="#666"/></svg>
<div class="a" style="left:1126.7px;top:278.7px;width:28.4px;height:15.6px;background:#222;"></div>
<svg style="left:1183.6px;top:284.7px" width="16" height="4" viewBox="0 0 16 4"><circle cx="2" cy="2" r="1.75" fill="#222"/><circle cx="8" cy="2" r="1.75" fill="#222"/><circle cx="14" cy="2" r="1.75" fill="#222"/></svg>
<div class="a" style="left:1208.8px;top:282.9px;width:7px;height:6.8px;background:#fff;border:1px solid #e6e6e6"></div>
<div class="t" style="left:953.0px;top:276.5px;font-size:14px;color:#f0f0f0;-webkit-text-stroke:1px #333;font-weight:bold;">A</div>
<svg style="left:950.8px;top:292.4px" width="16" height="3" viewBox="0 0 16 3"><rect x="0" y="0" width="2.8" height="2.8" fill="#d8262c"/><rect x="4.2" y="0" width="2.8" height="2.8" fill="#2a8fd6"/><rect x="8.4" y="0" width="2.8" height="2.8" fill="#1f9a4a"/><rect x="12.6" y="0" width="2.8" height="2.8" fill="#222"/></svg>
<div class="a" style="left:970.4px;top:302.3px;width:149px;height:22.2px;background:#e1e1e1;border:1px solid #cbcbcb"></div>
<div class="t" style="left:974.4px;top:307.9px;font-size:10.5px;letter-spacing:0.035px;color:#2a2a2a;">No Fill</div>
<svg style="left:1106.7px;top:311.7px" width="7.4" height="3.8"><path d="M0 0H7.4L3.7 3.8Z" fill="#666"/></svg>
<div class="a" style="left:1123.3px;top:302.3px;width:52.4px;height:22.2px;background:#fff;border:1px solid #cbcbcb"></div>
<div class="a" style="left:1157.6px;top:303.3px;width:17.1px;height:20.2px;background:#e1e1e1;border-left:1px solid #d4d4d4"></div>
<svg style="left:1162.9px;top:311.8px" width="7.4" height="3.8"><path d="M0 0H7.4L3.7 3.8Z" fill="#666"/></svg>
<div class="a" style="left:1126.7px;top:305.7px;width:28.4px;height:15.6px;background:#000;"></div>
<svg style="left:1183.6px;top:311.7px" width="16" height="4" viewBox="0 0 16 4"><circle cx="2" cy="2" r="1.75" fill="#222"/><circle cx="8" cy="2" r="1.75" fill="#222"/><circle cx="14" cy="2" r="1.75" fill="#222"/></svg>
<div class="a" style="left:1208.8px;top:309.9px;width:7px;height:6.8px;background:#fff;border:1px solid #e6e6e6"></div>
<div class="a" style="left:950.6px;top:307.4px;width:14.4px;height:12.4px;background:#e8862a;"></div>
<div class="t" style="left:951.4px;top:307.3px;font-size:10.5px;letter-spacing:0.173px;color:#fff;font-weight:bold;">ab</div>
<svg style="left:964.4px;top:305.6px" width="3" height="16" viewBox="0 0 3 16"><path d="M.4 .5H2.6M1.5 .5V15.5M.4 15.5H2.6" stroke="#555" stroke-width=".8" fill="none"/></svg>
<div class="a" style="left:970.4px;top:329px;width:149px;height:22.2px;background:#fff;border:1px solid #cbcbcb"></div>
<div class="a" style="left:1100px;top:330px;width:18.4px;height:20.2px;background:#e1e1e1;border-left:1px solid #d4d4d4"></div>
<svg style="left:1105.5px;top:338.4px" width="7.4" height="3.8"><path d="M0 0H7.4L3.7 3.8Z" fill="#666"/></svg>
<div class="t" style="left:974.4px;top:334.5px;font-size:10.5px;letter-spacing:-0.025px;color:#2a2a2a;">None</div>
<div class="a" style="left:1123.3px;top:329px;width:52.4px;height:22.2px;background:#fff;border:1px solid #cbcbcb"></div>
<div class="a" style="left:1157.6px;top:330px;width:17.1px;height:20.2px;background:#e1e1e1;border-left:1px solid #d4d4d4"></div>
<svg style="left:1162.9px;top:338.5px" width="7.4" height="3.8"><path d="M0 0H7.4L3.7 3.8Z" fill="#666"/></svg>
<svg style="left:1126.6px;top:332.4px" width="28.6" height="15.6" viewBox="0 0 28.6 15.6"><path d="M4.6 12.6L24.6 2.6" stroke="#e0343a" stroke-width="1"/></svg>
<svg style="left:1183.6px;top:338.4px" width="16" height="4" viewBox="0 0 16 4"><circle cx="2" cy="2" r="1.75" fill="#222"/><circle cx="8" cy="2" r="1.75" fill="#222"/><circle cx="14" cy="2" r="1.75" fill="#222"/></svg>
<div class="a" style="left:1208.8px;top:336.6px;width:7px;height:6.8px;background:#fff;border:1px solid #e6e6e6"></div>
<div class="t" style="left:950.6px;top:329.4px;font-size:19px;color:#f0f0f0;-webkit-text-stroke:1.1px #444;font-weight:bold;">A</div>
<div class="a" style="left:948px;top:364.3px;width:273.3px;height:18.6px;background:#e6e6e6;"></div>
<svg style="left:1080.7px;top:371.5px" width="7.4" height="3.8"><path d="M0 0H7.4L3.7 3.8Z" fill="#666"/></svg>
<div class="a" style="left:948px;top:382.9px;width:273.3px;height:3.6px;background:#f6f6f6;"></div>
<svg style="left:957px;top:398px" width="7.2" height="3.2"><path d="M0 3.2H7.2L3.6 0Z" fill="#777"/></svg>
<div class="t" style="left:974.0px;top:394.0px;font-size:10.8px;letter-spacing:-0.158px;color:#1a1a1a;font-weight:bold;">Paragraph</div>
<div class="a" style="left:1208.8px;top:395.4px;width:7px;height:6.8px;background:#fff;border:1px solid #e6e6e6"></div>
<svg style="left:1187px;top:394px" width="10.8" height="10.8" viewBox="0 0 10.8 10.8"><path d="M4.47 0.08L6.33 0.08L6.36 1.41L7.54 1.90L8.51 0.98L9.82 2.29L8.90 3.26L9.39 4.44L10.72 4.47L10.72 6.33L9.39 6.36L8.90 7.54L9.82 8.51L8.51 9.82L7.54 8.90L6.36 9.39L6.33 10.72L4.47 10.72L4.44 9.39L3.26 8.90L2.29 9.82L0.98 8.51L1.90 7.54L1.41 6.36L0.08 6.33L0.08 4.47L1.41 4.44L1.90 3.26L0.98 2.29L2.29 0.98L3.26 1.90L4.44 1.41Z" fill="#2b2b2b" stroke="#2b2b2b" stroke-width=".6" stroke-linejoin="round"/><circle cx="5.4" cy="5.4" r="2.27" fill="#f0f0f0"/></svg>
<div class="a" style="left:951px;top:414.7px;width:22.8px;height:22.2px;background:#fff;border:1px solid #dcdcdc"></div>
<svg style="left:954.4px;top:418.6px" width="16" height="16" viewBox="0 0 16 16"><path d="M0.0 0.6H9.4M0.0 2.7H9.4M0.0 4.8H9.4M0.0 6.8H16.0M0.0 8.9H16.0M0.0 11.0H16.0M0.0 13.1H16.0M0.0 15.2H16.0" stroke="#3a3a3a" stroke-width="1.15"/><path d="M10.4 -.4L15.8 5.4M15.8 -.4L10.4 5.4" stroke="#e0262c" stroke-width="1.1"/></svg>
<svg style="left:981px;top:418.6px" width="16" height="16" viewBox="0 0 16 16"><path d="M0.0 0.6H16.0M0.0 2.7H8.4M0.0 4.8H16.0M0.0 6.8H8.4M0.0 8.9H16.0M0.0 11.0H8.4M0.0 13.1H16.0M0.0 15.2H8.4" stroke="#3a3a3a" stroke-width="1.15"/></svg>
<svg style="left:1007.6px;top:418.6px" width="16" height="16" viewBox="0 0 16 16"><path d="M0.0 0.6H16.0M3.8 2.7H12.2M0.0 4.8H16.0M3.8 6.8H12.2M0.0 8.9H16.0M3.8 11.0H12.2M0.0 13.1H16.0M3.8 15.2H12.2" stroke="#3a3a3a" stroke-width="1.15"/></svg>
<svg style="left:1034px;top:418.6px" width="16" height="16" viewBox="0 0 16 16"><path d="M0.0 0.6H16.0M7.6 2.7H16.0M0.0 4.8H16.0M7.6 6.8H16.0M0.0 8.9H16.0M7.6 11.0H16.0M0.0 13.1H16.0M7.6 15.2H16.0" stroke="#3a3a3a" stroke-width="1.15"/></svg>
<svg style="left:1061px;top:418.6px" width="16" height="16" viewBox="0 0 16 16"><path d="M0.0 0.6H16.0M0.0 2.7H16.0M0.0 4.8H16.0M0.0 6.8H16.0M0.0 8.9H16.0M0.0 11.0H16.0M0.0 13.1H16.0M0.0 15.2H8.0" stroke="#3a3a3a" stroke-width="1.15"/></svg>
<svg style="left:1088px;top:418.6px" width="16" height="16" viewBox="0 0 16 16"><path d="M0.0 0.6H16.0M0.0 2.7H16.0M0.0 4.8H16.0M0.0 6.8H16.0M0.0 8.9H16.0M0.0 11.0H16.0M0.0 13.1H16.0M0.0 15.2H16.0" stroke="#3a3a3a" stroke-width="1.15"/></svg>
<div class="a" style="left:1208.8px;top:422.6px;width:7px;height:6.8px;background:#fff;border:1px solid #e6e6e6"></div>
<svg style="left:950.4px;top:451.4px" width="17" height="17" viewBox="0 0 17 17"><path d="M1.6 1V16M.2 2.8L1.6 .8L3 2.8M.2 14.2L1.6 16.2L3 14.2" stroke="#333" stroke-width=".9" fill="none"/><path d="M5 1.4H16.6M5 4.4H13M5 7.4H16.6M5 10.4H13M5 13.4H16.6M5 16H13" stroke="#555" stroke-width="1.2"/></svg>
<div class="a" style="left:970.4px;top:448.6px;width:96.8px;height:22.4px;background:#fff;border:1px solid #cbcbcb"></div>
<div class="a" style="left:1048px;top:449.6px;width:18.2px;height:20.4px;background:#e1e1e1;border-left:1px solid #d4d4d4"></div>
<svg style="left:1054.4px;top:453.65px" width="5.4" height="2.7"><path d="M0 2.7H5.4L2.7 0Z" fill="#858585"/></svg>
<svg style="left:1054.4px;top:463.45px" width="5.4" height="2.7"><path d="M0 0H5.4L2.7 2.7Z" fill="#858585"/></svg>
<div class="t" style="left:974.6px;top:454.1px;font-size:10.5px;letter-spacing:-0.304px;color:#2a2a2a;">100.0 %</div>
<div class="a" style="left:1073.6px;top:456.6px;width:7px;height:6.8px;background:#fff;border:1px solid #e6e6e6"></div>
<div class="a" style="left:1086.6px;top:448.6px;width:115.8px;height:22.4px;background:#e1e1e1;border:1px solid #cbcbcb"></div>
<div class="t" style="left:1091.0px;top:454.1px;font-size:10.5px;letter-spacing:-0.229px;color:#2a2a2a;">% of Char. Height</div>
<svg style="left:1190.7px;top:458.1px" width="7.4" height="3.8"><path d="M0 0H7.4L3.7 3.8Z" fill="#666"/></svg>
<div class="a" style="left:1208.8px;top:456.6px;width:7px;height:6.8px;background:#fff;border:1px solid #e6e6e6"></div>
<svg style="left:950.4px;top:485.4px" width="17" height="17" viewBox="0 0 17 17"><path d="M0 8.4H4M4 8.4L2.6 7.2M4 8.4L2.6 9.6" stroke="#333" stroke-width=".9" fill="none"/><path d="M5.6 0V17" stroke="#2a8fd6" stroke-width="1.1"/><path d="M7.6 1.4H16.6M7.6 4.4H14M7.6 7.4H16.6M7.6 10.4H14M7.6 13.4H16.6M7.6 16H14" stroke="#555" stroke-width="1.2"/></svg>
<div class="a" style="left:970.4px;top:482.6px;width:96.8px;height:22.4px;background:#fff;border:1px solid #cbcbcb"></div>
<div class="a" style="left:1048px;top:483.6px;width:18.2px;height:20.4px;background:#e1e1e1;border-left:1px solid #d4d4d4"></div>
<svg style="left:1054.4px;top:487.65px" width="5.4" height="2.7"><path d="M0 2.7H5.4L2.7 0Z" fill="#858585"/></svg>
<svg style="left:1054.4px;top:497.45px" width="5.4" height="2.7"><path d="M0 0H5.4L2.7 2.7Z" fill="#858585"/></svg>
<div class="t" style="left:974.6px;top:488.1px;font-size:10.5px;letter-spacing:-0.328px;color:#2a2a2a;">0.0 &quot;</div>
<div class="a" style="left:1073.6px;top:490.6px;width:7px;height:6.8px;background:#fff;border:1px solid #e6e6e6"></div>
<svg style="left:1086px;top:485.4px" width="17" height="17" viewBox="0 0 17 17"><path d="M0 1.6H4M4 1.6L2.6 .4M4 1.6L2.6 2.8" stroke="#333" stroke-width=".9" fill="none"/><rect x="5.6" y="0" width="11" height="3.8" fill="#2a8fd6"/><path d="M5.6 6.4H16.6M5.6 9.2H14M5.6 12H16.6M5.6 14.8H14" stroke="#555" stroke-width="1.2"/></svg>
<div class="a" style="left:1105.2px;top:482.6px;width:97.2px;height:22.4px;background:#fff;border:1px solid #cbcbcb"></div>
<div class="a" style="left:1183.2px;top:483.6px;width:18.2px;height:20.4px;background:#e1e1e1;border-left:1px solid #d4d4d4"></div>
<svg style="left:1189.6px;top:487.65px" width="5.4" height="2.7"><path d="M0 2.7H5.4L2.7 0Z" fill="#858585"/></svg>
<svg style="left:1189.6px;top:497.45px" width="5.4" height="2.7"><path d="M0 0H5.4L2.7 2.7Z" fill="#858585"/></svg>
<div class="t" style="left:1109.6px;top:488.1px;font-size:10.5px;letter-spacing:-0.304px;color:#2a2a2a;">100.0 %</div>
<div class="a" style="left:1208.8px;top:490.6px;width:7px;height:6.8px;background:#fff;border:1px solid #e6e6e6"></div>
<svg style="left:950.4px;top:511.8px" width="17" height="17" viewBox="0 0 17 17"><path d="M0 1.6H4M4 1.6L2.6 .4M4 1.6L2.6 2.8" stroke="#333" stroke-width=".9" fill="none"/><path d="M6 1.4H16.6" stroke="#2a8fd6" stroke-width="1.4"/><path d="M4 4.4H14M4 7.4H16.6M4 10.4H14M4 13.4H16.6M4 16H14" stroke="#555" stroke-width="1.2"/></svg>
<div class="a" style="left:970.4px;top:509px;width:96.8px;height:22.4px;background:#fff;border:1px solid #cbcbcb"></div>
<div class="a" style="left:1048px;top:510px;width:18.2px;height:20.4px;background:#e1e1e1;border-left:1px solid #d4d4d4"></div>
<svg style="left:1054.4px;top:514.05px" width="5.4" height="2.7"><path d="M0 2.7H5.4L2.7 0Z" fill="#858585"/></svg>
<svg style="left:1054.4px;top:523.85px" width="5.4" height="2.7"><path d="M0 0H5.4L2.7 2.7Z" fill="#858585"/></svg>
<div class="t" style="left:974.6px;top:514.5px;font-size:10.5px;letter-spacing:-0.328px;color:#2a2a2a;">0.0 &quot;</div>
<div class="a" style="left:1073.6px;top:517px;width:7px;height:6.8px;background:#fff;border:1px solid #e6e6e6"></div>
<svg style="left:1086px;top:511.8px" width="17" height="17" viewBox="0 0 17 17"><path d="M0 15.4H4M4 15.4L2.6 14.2M4 15.4L2.6 16.6" stroke="#333" stroke-width=".9" fill="none"/><rect x="5.6" y="13.2" width="11" height="3.8" fill="#2a8fd6"/><path d="M5.6 .8H16.6M5.6 3.6H14M5.6 6.4H16.6M5.6 9.2H14" stroke="#555" stroke-width="1.2"/></svg>
<div class="a" style="left:1105.2px;top:509px;width:97.2px;height:22.4px;background:#fff;border:1px solid #cbcbcb"></div>
<div class="a" style="left:1183.2px;top:510px;width:18.2px;height:20.4px;background:#e1e1e1;border-left:1px solid #d4d4d4"></div>
<svg style="left:1189.6px;top:514.05px" width="5.4" height="2.7"><path d="M0 2.7H5.4L2.7 0Z" fill="#858585"/></svg>
<svg style="left:1189.6px;top:523.85px" width="5.4" height="2.7"><path d="M0 0H5.4L2.7 2.7Z" fill="#858585"/></svg>
<div class="t" style="left:1109.6px;top:514.5px;font-size:10.5px;letter-spacing:-0.290px;color:#2a2a2a;">0.0 %</div>
<div class="a" style="left:1208.8px;top:517px;width:7px;height:6.8px;background:#fff;border:1px solid #e6e6e6"></div>
<svg style="left:950.4px;top:539px" width="17" height="17" viewBox="0 0 17 17"><path d="M17 8.4H13M13 8.4L14.4 7.2M13 8.4L14.4 9.6" stroke="#333" stroke-width=".9" fill="none"/><path d="M11.4 0V17" stroke="#2a8fd6" stroke-width="1.1"/><path d="M0 1.4H9.6M0 4.4H9.6M0 7.4H7M0 10.4H9.6M0 13.4H7M0 16H9.6" stroke="#555" stroke-width="1.2"/></svg>
<div class="a" style="left:970.4px;top:536.2px;width:96.8px;height:22.4px;background:#fff;border:1px solid #cbcbcb"></div>
<div class="a" style="left:1048px;top:537.2px;width:18.2px;height:20.4px;background:#e1e1e1;border-left:1px solid #d4d4d4"></div>
<svg style="left:1054.4px;top:541.25px" width="5.4" height="2.7"><path d="M0 2.7H5.4L2.7 0Z" fill="#858585"/></svg>
<svg style="left:1054.4px;top:551.05px" width="5.4" height="2.7"><path d="M0 0H5.4L2.7 2.7Z" fill="#858585"/></svg>
<div class="t" style="left:974.6px;top:541.7px;font-size:10.5px;letter-spacing:-0.328px;color:#2a2a2a;">0.0 &quot;</div>
<div class="a" style="left:1073.6px;top:544.2px;width:7px;height:6.8px;background:#fff;border:1px solid #e6e6e6"></div>
<div class="a" style="left:948px;top:565px;width:273.3px;height:16px;background:#e6e6e6;"></div>
<svg style="left:1080.7px;top:571.5px" width="7.4" height="3.8"><path d="M0 0H7.4L3.7 3.8Z" fill="#666"/></svg>
<div class="a" style="left:948px;top:581px;width:273.3px;height:3.6px;background:#f6f6f6;"></div>
<svg style="left:957px;top:598px" width="7.2" height="3.2"><path d="M0 3.2H7.2L3.6 0Z" fill="#777"/></svg>
<div class="t" style="left:974.0px;top:594.0px;font-size:10.8px;letter-spacing:-0.483px;color:#1a1a1a;font-weight:bold;">Frame</div>
<div class="a" style="left:1208.8px;top:595.4px;width:7px;height:6.8px;background:#fff;border:1px solid #e6e6e6"></div>
<svg style="left:951.4px;top:618.2px" width="15.4" height="15.4" viewBox="0 0 17 17"><rect x="1.6" y="1.6" width="13.8" height="13.8" fill="#e8862a" stroke="#7a3d0c" stroke-width="1"/><g fill="#5a2c08"><rect x="0" y="0" width="2.8" height="2.8"/><rect x="14.2" y="0" width="2.8" height="2.8"/><rect x="0" y="14.2" width="2.8" height="2.8"/><rect x="14.2" y="14.2" width="2.8" height="2.8"/><rect x="0" y="7.2" width="2.4" height="2.4"/><rect x="14.6" y="7.2" width="2.4" height="2.4"/></g></svg>
<div class="t" style="left:955.4px;top:620.1px;font-size:10.5px;color:#fff;font-weight:bold;">A</div>
<div class="a" style="left:970.4px;top:614.5px;width:54.2px;height:22.2px;background:#fff;border:1px solid #cbcbcb"></div>
<div class="a" style="left:1006px;top:615.5px;width:17.6px;height:20.2px;background:#e1e1e1;border-left:1px solid #d4d4d4"></div>
<svg style="left:1011.1px;top:623.9px" width="7.4" height="3.8"><path d="M0 0H7.4L3.7 3.8Z" fill="#666"/></svg>
<svg style="left:974px;top:618px" width="30" height="15" viewBox="0 0 30 15"><path d="M3.6 11.6L25.4 3" stroke="#e0343a" stroke-width="1"/></svg>
<div class="a" style="left:1031.6px;top:622.2px;width:7px;height:6.8px;background:#fff;border:1px solid #e6e6e6"></div>
<div class="t" style="left:1065.0px;top:614.2px;font-size:17.5px;color:#2b2b2b;font-weight:bold;">A</div>
<svg style="left:1064.4px;top:617px" width="16.6" height="18" viewBox="0 0 16.6 18"><path d="M0 1H16.6M0 3.4H16.6" stroke="#333" stroke-width=".9" stroke-dasharray="1.2 .8"/><path d="M0 15.6H16.6" stroke="#2a8fd6" stroke-width="1.6"/><path d="M0 17.6H16.6" stroke="#888" stroke-width=".7"/></svg>
<div class="a" style="left:1091.2px;top:622.2px;width:7px;height:6.8px;background:#fff;border:1px solid #e6e6e6"></div>
<svg style="left:1124px;top:617.4px" width="16.6" height="16" viewBox="0 0 16.6 16"><rect x="1.2" y="1.2" width="14" height="13.4" fill="none" stroke="#333" stroke-width="1.1"/><path d="M3.6 4.2H12.8M3.6 6.6H12.8M3.6 9H12.8M3.6 11.4H12.8" stroke="#555" stroke-width=".9"/><g fill="#333"><rect x="0" y="0" width="2.4" height="2.4"/><rect x="14" y="0" width="2.4" height="2.4"/><rect x="0" y="13.4" width="2.4" height="2.4"/><rect x="14" y="13.4" width="2.4" height="2.4"/></g></svg>
<svg style="left:1139.4px;top:634.4px" width="3.2" height="3.2" viewBox="0 0 3.2 3.2"><path d="M3.2 0V3.2H0Z" fill="#777"/></svg>
<div class="a" style="left:970.4px;top:641.6px;width:37px;height:3.4px;background:#fff;border:1px solid #cbcbcb;border-bottom:0"></div>
<div class="a" style="left:1007.4px;top:641.6px;width:17.2px;height:3.4px;background:#e1e1e1;border:1px solid #cbcbcb;border-bottom:0"></div>
<div class="a" style="left:950.6px;top:642.4px;width:6.4px;height:2.6px;background:#6fb3e0;"></div>
<div class="a" style="left:958.4px;top:642.4px;width:8px;height:2.6px;background:#999;"></div>
<div class="a" style="left:1239.2px;top:135.2px;width:20.4px;height:509.8px;background:#e4e4e4;"></div>
<div class="a" style="left:1239.2px;top:135.2px;width:20.4px;height:66.2px;background:#b5b5b5;"></div>
<div class="t" style="left:1241.6px;top:138.1px;font-size:9.5px;color:#222;">A</div>
<svg style="left:1249.6px;top:147.2px" width="7.6" height="7.6" viewBox="0 0 7.6 7.6"><path d="M3.15 0.06L4.45 0.06L4.47 0.99L5.31 1.34L5.99 0.69L6.91 1.61L6.26 2.29L6.61 3.13L7.54 3.15L7.54 4.45L6.61 4.47L6.26 5.31L6.91 5.99L5.99 6.91L5.31 6.26L4.47 6.61L4.45 7.54L3.15 7.54L3.13 6.61L2.29 6.26L1.61 6.91L0.69 5.99L1.34 5.31L0.99 4.47L0.06 4.45L0.06 3.15L0.99 3.13L1.34 2.29L0.69 1.61L1.61 0.69L2.29 1.34L3.13 0.99Z" fill="#222" stroke="#222" stroke-width=".6" stroke-linejoin="round"/><circle cx="3.8" cy="3.8" r="1.60" fill="#b5b5b5"/></svg>
<div class="t" style="left:1255.6px;top:161.4px;width:0;height:0;font-size:10.8px;color:#222"><div style="position:absolute;transform:rotate(90deg);transform-origin:0 0;white-space:nowrap;letter-spacing:-.2px">Text</div></div>
<svg style="left:1243.6px;top:207px" width="11" height="11" viewBox="0 0 11 11"><path d="M5.5 0V11M0 5.5H11" stroke="#b9b9b9" stroke-width="1.6"/></svg>
<svg style="left:1262px;top:115px" width="16" height="6" viewBox="0 0 16 6"><rect x="0" y="0" width="1" height="1" fill="#cfcfcf"/><rect x="2" y="0" width="1" height="1" fill="#cfcfcf"/><rect x="4" y="0" width="1" height="1" fill="#cfcfcf"/><rect x="6" y="0" width="1" height="1" fill="#cfcfcf"/><rect x="8" y="0" width="1" height="1" fill="#cfcfcf"/><rect x="10" y="0" width="1" height="1" fill="#cfcfcf"/><rect x="12" y="0" width="1" height="1" fill="#cfcfcf"/><rect x="14" y="0" width="1" height="1" fill="#cfcfcf"/><rect x="1" y="1.6" width="1" height="1" fill="#cfcfcf"/><rect x="3" y="1.6" width="1" height="1" fill="#cfcfcf"/><rect x="5" y="1.6" width="1" height="1" fill="#cfcfcf"/><rect x="7" y="1.6" width="1" height="1" fill="#cfcfcf"/><rect x="9" y="1.6" width="1" height="1" fill="#cfcfcf"/><rect x="11" y="1.6" width="1" height="1" fill="#cfcfcf"/><rect x="13" y="1.6" width="1" height="1" fill="#cfcfcf"/><rect x="15" y="1.6" width="1" height="1" fill="#cfcfcf"/><rect x="0" y="3.2" width="1" height="1" fill="#cfcfcf"/><rect x="2" y="3.2" width="1" height="1" fill="#cfcfcf"/><rect x="4" y="3.2" width="1" height="1" fill="#cfcfcf"/><rect x="6" y="3.2" width="1" height="1" fill="#cfcfcf"/><rect x="8" y="3.2" width="1" height="1" fill="#cfcfcf"/><rect x="10" y="3.2" width="1" height="1" fill="#cfcfcf"/><rect x="12" y="3.2" width="1" height="1" fill="#cfcfcf"/><rect x="14" y="3.2" width="1" height="1" fill="#cfcfcf"/><rect x="1" y="4.8" width="1" height="1" fill="#cfcfcf"/><rect x="3" y="4.8" width="1" height="1" fill="#cfcfcf"/><rect x="5" y="4.8" width="1" height="1" fill="#cfcfcf"/><rect x="7" y="4.8" width="1" height="1" fill="#cfcfcf"/><rect x="9" y="4.8" width="1" height="1" fill="#cfcfcf"/><rect x="11" y="4.8" width="1" height="1" fill="#cfcfcf"/><rect x="13" y="4.8" width="1" height="1" fill="#cfcfcf"/><rect x="15" y="4.8" width="1" height="1" fill="#cfcfcf"/></svg>
<svg style="left:1267.4px;top:126px" width="5" height="9" viewBox="0 0 5 9"><path d="M0 0L5 4.5L0 9Z" fill="#444"/></svg>
<svg style="left:1262px;top:143px" width="16" height="16" viewBox="0 0 16 16"><path d="M10.6 2.2Q12.6 -.4 14.4 1.4Q16.2 3.2 13.8 5.2L14.4 6.2L12.8 7.8L8 3L9.6 1.4Z" fill="#c4c4c4"/><path d="M8.8 4.8L2.2 11.4L1 14.6L4.4 13.6L11 7" fill="none" stroke="#c4c4c4" stroke-width="1.2"/></svg>
<svg style="left:1264.6px;top:165px" width="10" height="6" viewBox="0 0 10 6"><path d="M.8 5.4L5 1.2L9.2 5.4" fill="none" stroke="#cacaca" stroke-width="1.5"/></svg>
<div class="a" style="left:1262px;top:177.6px;width:16.4px;height:16.66px;background:#fff;border:1px solid #5a5a5a"></div>
<svg style="left:1263px;top:178.6px" width="14.4" height="14.6" viewBox="0 0 14.4 14.6"><path d="M1.6 12.6L12.8 2" stroke="#e0343a" stroke-width="1"/></svg>
<div class="a" style="left:1262px;top:194.26px;width:16.4px;height:16.76px;background:#231f20;"></div>
<div class="a" style="left:1262px;top:210.92px;width:16.4px;height:16.76px;background:#414042;"></div>
<div class="a" style="left:1262px;top:227.58px;width:16.4px;height:16.76px;background:#58595b;"></div>
<div class="a" style="left:1262px;top:244.24px;width:16.4px;height:16.76px;background:#6d6e71;"></div>
<div class="a" style="left:1262px;top:260.9px;width:16.4px;height:16.76px;background:#808285;"></div>
<div class="a" style="left:1262px;top:277.56px;width:16.4px;height:16.76px;background:#939598;"></div>
<div class="a" style="left:1262px;top:294.22px;width:16.4px;height:16.76px;background:#a7a9ac;"></div>
<div class="a" style="left:1262px;top:310.88px;width:16.4px;height:16.76px;background:#bcbec0;"></div>
<div class="a" style="left:1262px;top:327.54px;width:16.4px;height:16.76px;background:#d1d3d4;"></div>
<div class="a" style="left:1262px;top:344.2px;width:16.4px;height:16.76px;background:#e6e7e8;"></div>
<div class="a" style="left:1262px;top:360.86px;width:16.4px;height:16.76px;background:#ffffff;"></div>
<div class="a" style="left:1262px;top:377.52px;width:16.4px;height:16.76px;background:#2e3192;"></div>
<div class="a" style="left:1262px;top:394.18px;width:16.4px;height:16.76px;background:#00aeef;"></div>
<div class="a" style="left:1262px;top:410.84px;width:16.4px;height:16.76px;background:#00a651;"></div>
<div class="a" style="left:1262px;top:427.5px;width:16.4px;height:16.76px;background:#fff200;"></div>
<div class="a" style="left:1262px;top:444.16px;width:16.4px;height:16.76px;background:#ed1c24;"></div>
<div class="a" style="left:1262px;top:460.82px;width:16.4px;height:16.76px;background:#ec008c;"></div>
<div class="a" style="left:1262px;top:477.48px;width:16.4px;height:16.76px;background:#a3478f;"></div>
<div class="a" style="left:1262px;top:494.14px;width:16.4px;height:16.76px;background:#f58220;"></div>
<div class="a" style="left:1262px;top:510.8px;width:16.4px;height:16.76px;background:#f5aaad;"></div>
<div class="a" style="left:1262px;top:527.46px;width:16.4px;height:16.76px;background:#7d6b67;"></div>
<div class="a" style="left:1262px;top:544.12px;width:16.4px;height:16.76px;background:#c7c9e6;"></div>
<div class="a" style="left:1262px;top:560.78px;width:16.4px;height:16.76px;background:#a29fcd;"></div>
<div class="a" style="left:1262px;top:577.44px;width:16.4px;height:16.76px;background:#6b8fce;"></div>
<div class="a" style="left:1262px;top:594.1px;width:16.4px;height:10.2px;background:#7a70ba;"></div>
<svg style="left:1264.6px;top:608.6px" width="10" height="6" viewBox="0 0 10 6"><path d="M.8 .6L5 4.8L9.2 .6" fill="none" stroke="#c4c4c4" stroke-width="1.5"/></svg>
<svg style="left:1264.6px;top:625px" width="10" height="8" viewBox="0 0 10 8"><path d="M.8 .6L4.2 4L.8 7.4M5.4 .6L8.8 4L5.4 7.4" fill="none" stroke="#c4c4c4" stroke-width="1.2"/></svg>
<!-- s_bottom -->
<div class="a" style="left:29px;top:601.2px;width:918px;height:23.2px;background:#f0f0f0;"></div>
<svg style="left:35.6px;top:608.4px" width="10" height="10" viewBox="0 0 10 10"><path d="M5 0V10M0 5H10" stroke="#222" stroke-width="1.4"/></svg>
<svg style="left:57px;top:608.8px" width="10.6" height="9" viewBox="0 0 10.6 9"><path d="M.8 0V9" stroke="#222" stroke-width="1.5"/><path d="M10.4 0V9L3 4.5Z" fill="#222"/></svg>
<svg style="left:81px;top:608.8px" width="7.6" height="9" viewBox="0 0 7.6 9"><path d="M7.4 0V9L0 4.5Z" fill="#222"/></svg>
<div class="t" style="left:103.0px;top:607.5px;font-size:10.5px;letter-spacing:-0.138px;color:#8c8c8c;">10  of  27</div>
<svg style="left:161.2px;top:608.8px" width="7.6" height="9" viewBox="0 0 7.6 9"><path d="M0 0V9L7.4 4.5Z" fill="#222"/></svg>
<svg style="left:181.8px;top:608.8px" width="10.8" height="9" viewBox="0 0 10.8 9"><path d="M9.9 0V9" stroke="#222" stroke-width="1.5"/><path d="M0 0V9L7.4 4.5Z" fill="#222"/></svg>
<svg style="left:204.2px;top:608.4px" width="10" height="10" viewBox="0 0 10 10"><path d="M5 0V10M0 5H10" stroke="#222" stroke-width="1.4"/></svg>
<div class="a" style="left:824.2px;top:602.4px;width:100px;height:21.8px;background:#c8c8c8;"></div>
<div class="a" style="left:220.8px;top:603px;width:1px;height:20px;background:#e2e2e2;"></div>
<div class="a" style="left:321.35px;top:603px;width:1px;height:20px;background:#e2e2e2;"></div>
<div class="a" style="left:421.9px;top:603px;width:1px;height:20px;background:#e2e2e2;"></div>
<div class="a" style="left:522.45px;top:603px;width:1px;height:20px;background:#e2e2e2;"></div>
<div class="a" style="left:623px;top:603px;width:1px;height:20px;background:#e2e2e2;"></div>
<div class="a" style="left:723.55px;top:603px;width:1px;height:20px;background:#e2e2e2;"></div>
<div class="a" style="left:824.1px;top:603px;width:1px;height:20px;background:#e2e2e2;"></div>
<div class="a" style="left:924.65px;top:603px;width:1px;height:20px;background:#e2e2e2;"></div>
<div class="t" style="left:254.0px;top:607.6px;font-size:10.5px;letter-spacing:-0.379px;color:#2a2a2a;">Page 5</div>
<div class="t" style="left:354.6px;top:607.6px;font-size:10.5px;letter-spacing:-0.379px;color:#2a2a2a;">Page 6</div>
<div class="t" style="left:455.2px;top:607.6px;font-size:10.5px;letter-spacing:-0.379px;color:#2a2a2a;">Page 7</div>
<div class="t" style="left:555.8px;top:607.6px;font-size:10.5px;letter-spacing:-0.379px;color:#2a2a2a;">Page 8</div>
<div class="t" style="left:656.6px;top:607.6px;font-size:10.5px;letter-spacing:-0.379px;color:#2a2a2a;">Page 9</div>
<div class="t" style="left:754.0px;top:607.6px;font-size:10.5px;letter-spacing:-0.245px;color:#2a2a2a;">Page 10</div>
<div class="t" style="left:855.0px;top:607.6px;font-size:10.5px;letter-spacing:-0.191px;color:#2a2a2a;">Page 11</div>
<div class="a" style="left:29px;top:624.4px;width:918px;height:20.6px;background:#f0f0f0;"></div>
<div class="a" style="left:29px;top:624.4px;width:918px;height:1px;background:#e6e6e6;"></div>
<svg style="left:32px;top:627.6px" width="5" height="15" viewBox="0 0 5 15"><rect x="0" y="0" width="1" height="1" fill="#c4c4c4"/><rect x="1.6" y="0" width="1" height="1" fill="#c4c4c4"/><rect x="3.2" y="0" width="1" height="1" fill="#c4c4c4"/><rect x="0.8" y="1.56" width="1" height="1" fill="#c4c4c4"/><rect x="2.4" y="1.56" width="1" height="1" fill="#c4c4c4"/><rect x="4" y="1.56" width="1" height="1" fill="#c4c4c4"/><rect x="0" y="3.12" width="1" height="1" fill="#c4c4c4"/><rect x="1.6" y="3.12" width="1" height="1" fill="#c4c4c4"/><rect x="3.2" y="3.12" width="1" height="1" fill="#c4c4c4"/><rect x="0.8" y="4.68" width="1" height="1" fill="#c4c4c4"/><rect x="2.4" y="4.68" width="1" height="1" fill="#c4c4c4"/><rect x="4" y="4.68" width="1" height="1" fill="#c4c4c4"/><rect x="0" y="6.24" width="1" height="1" fill="#c4c4c4"/><rect x="1.6" y="6.24" width="1" height="1" fill="#c4c4c4"/><rect x="3.2" y="6.24" width="1" height="1" fill="#c4c4c4"/><rect x="0.8" y="7.8" width="1" height="1" fill="#c4c4c4"/><rect x="2.4" y="7.8" width="1" height="1" fill="#c4c4c4"/><rect x="4" y="7.8" width="1" height="1" fill="#c4c4c4"/><rect x="0" y="9.36" width="1" height="1" fill="#c4c4c4"/><rect x="1.6" y="9.36" width="1" height="1" fill="#c4c4c4"/><rect x="3.2" y="9.36" width="1" height="1" fill="#c4c4c4"/><rect x="0.8" y="10.92" width="1" height="1" fill="#c4c4c4"/><rect x="2.4" y="10.92" width="1" height="1" fill="#c4c4c4"/><rect x="4" y="10.92" width="1" height="1" fill="#c4c4c4"/><rect x="0" y="12.48" width="1" height="1" fill="#c4c4c4"/><rect x="1.6" y="12.48" width="1" height="1" fill="#c4c4c4"/><rect x="3.2" y="12.48" width="1" height="1" fill="#c4c4c4"/><rect x="0.8" y="14.04" width="1" height="1" fill="#c4c4c4"/><rect x="2.4" y="14.04" width="1" height="1" fill="#c4c4c4"/><rect x="4" y="14.04" width="1" height="1" fill="#c4c4c4"/></svg>
<svg style="left:45px;top:631px" width="3.6" height="8.6" viewBox="0 0 3.6 8.6"><path d="M0 0L3.6 4.3L0 8.6Z" fill="#444"/></svg>
<svg style="left:60px;top:629.6px" width="13.6" height="13" viewBox="0 0 13.6 13"><path d="M8.8 1.8Q10.6 -.4 12.2 1.2Q13.8 2.8 11.6 4.6L12.2 5.4L10.8 6.8L6.6 2.6L8 1.2Z" fill="#222"/><path d="M7.4 4L1.8 9.6L.8 12.4L3.6 11.4L9.2 5.8Z" fill="#b5622a" stroke="#333" stroke-width=".9"/></svg>
<svg style="left:81.4px;top:630.6px" width="6.4" height="10" viewBox="0 0 6.4 10"><path d="M5.6 .6L1 5L5.6 9.4" fill="none" stroke="#cdcdcd" stroke-width="1.3"/></svg>
<div class="a" style="left:93.2px;top:626.7px;width:17.4px;height:17px;background:#fff;border:1px solid #555"></div>
<svg style="left:94.2px;top:627.7px" width="15.4" height="15" viewBox="0 0 15.4 15"><path d="M2 12.6L13.4 2.4" stroke="#e0343a" stroke-width="1"/></svg>
<div class="a" style="left:110.4px;top:626.7px;width:17.2px;height:17px;background:#fff200;border:1px solid #77771c"></div>
<svg style="left:906.6px;top:630.6px" width="6.4" height="10" viewBox="0 0 6.4 10"><path d="M.8 .6L5.4 5L.8 9.4" fill="none" stroke="#d0d0d0" stroke-width="1.3"/></svg>
<svg style="left:925px;top:631px" width="10" height="9" viewBox="0 0 10 9"><path d="M.8 .6L4.6 4.5L.8 8.4M5.4 .6L9.2 4.5L5.4 8.4" fill="none" stroke="#bdbdbd" stroke-width="1.2"/></svg>
<div class="a" style="left:946px;top:601px;width:1px;height:44px;background:#fbfbfb;"></div>
<div class="a" style="left:0px;top:645px;width:1280px;height:35.3px;background:#f0f0f0;"></div>
<div class="a" style="left:0px;top:645px;width:1280px;height:1px;background:#e4e4e4;"></div>
<svg style="left:8.8px;top:654.4px" width="16.4" height="16.4" viewBox="0 0 16.4 16.4"><path d="M6.79 0.12L9.61 0.12L9.65 2.14L11.46 2.89L12.92 1.49L14.91 3.48L13.51 4.94L14.26 6.75L16.28 6.79L16.28 9.61L14.26 9.65L13.51 11.46L14.91 12.92L12.92 14.91L11.46 13.51L9.65 14.26L9.61 16.28L6.79 16.28L6.75 14.26L4.94 13.51L3.48 14.91L1.49 12.92L2.89 11.46L2.14 9.65L0.12 9.61L0.12 6.79L2.14 6.75L2.89 4.94L1.49 3.48L3.48 1.49L4.94 2.89L6.75 2.14Z" fill="#1e1e1e" stroke="#1e1e1e" stroke-width=".6" stroke-linejoin="round"/><circle cx="8.2" cy="8.2" r="3.44" fill="#f0f0f0"/></svg>
<svg style="left:24.4px;top:669.4px" width="3.2" height="3.2" viewBox="0 0 3.2 3.2"><path d="M3.2 0V3.2H0Z" fill="#777"/></svg>
<div class="t" style="left:33.4px;top:657.5px;font-size:10.5px;letter-spacing:-0.057px;color:#2a2a2a;">Next click for Drag/Scale; Second click for Rotate/Skew; Dbl-clicking tool selects all objects; Shift+click multi-selects; Alt+click digs</div>
<svg style="left:801px;top:654.6px" width="17" height="17" viewBox="0 0 17 17"><path d="M7 .8L13.6 7.4L7.4 13.6L.8 7Z" fill="#fff" stroke="#222" stroke-width="1.3" stroke-linejoin="round"/><path d="M7 .8L9.6 3.4" stroke="#222" stroke-width="2.4"/><path d="M3.2 7.6H11.4L7.4 11.6Z" fill="#d8262c"/><path d="M16.6 10.6V16.4H11Z" fill="#d8262c"/></svg>
<div class="a" style="left:820.2px;top:652.7px;width:19.8px;height:19.8px;background:#fff;border:1px solid #cfcfcf"></div>
<svg style="left:821.2px;top:653.7px" width="17.8" height="17.8" viewBox="0 0 17.8 17.8"><path d="M.4 17.4L17.4 .4" stroke="#d8262c" stroke-width="1.5"/></svg>
<div class="t" style="left:844.6px;top:657.3px;font-size:10.5px;letter-spacing:-0.125px;color:#2a2a2a;">None</div>
<svg style="left:1007px;top:655px" width="8.4" height="15.6" viewBox="0 0 8.4 15.6"><path d="M4.2 .4L7.6 7.4L6.2 11H2.2L.8 7.4Z" fill="#f6f6f6" stroke="#333" stroke-width="1"/><path d="M4.2 1V7" stroke="#333" stroke-width=".8"/><circle cx="4.2" cy="7.6" r=".9" fill="#333"/><rect x="1.8" y="11.6" width="4.8" height="3.4" fill="#f6f6f6" stroke="#333" stroke-width="1"/></svg>
<div class="a" style="left:1020px;top:653px;width:18.8px;height:18.6px;background:#231f20;"></div>
<div class="t" style="left:1043.4px;top:657.3px;font-size:10.5px;letter-spacing:-0.342px;color:#2a2a2a;">C:0 M:0 Y:0 K:100</div>
<div class="t" style="left:1129.0px;top:657.3px;font-size:10.5px;letter-spacing:0.089px;color:#2a2a2a;">0.200 mm</div>
<div class="a" style="left:1247px;top:650px;width:1px;height:26px;background:#e2e2e2;"></div>
<svg style="left:1255px;top:654.6px" width="17.4" height="16" viewBox="0 0 17.4 16"><rect x=".6" y=".6" width="16.2" height="11.6" fill="#39a0dc" stroke="#1b6fa6" stroke-width=".8"/><rect x="1" y="1" width="15.4" height="5.4" fill="#e0343a"/><circle cx="8.7" cy="6.4" r="2.6" fill="#39a0dc" stroke="#fff" stroke-width=".9"/><circle cx="8.7" cy="6.4" r="1" fill="#e0343a"/><path d="M8.7 12.2V14.6M4.6 15H12.8" stroke="#444" stroke-width="1.2"/></svg>
<div class="a" style="left:0px;top:680.3px;width:1280px;height:39.7px;background:#101010;"></div>
<div class="a" style="left:198.8px;top:680.3px;width:48.4px;height:39.7px;background:#333;"></div>
<div class="a" style="left:103px;top:717.8px;width:40.4px;height:2.2px;background:#dfa3e8;"></div>
<div class="a" style="left:153.8px;top:717.8px;width:40.4px;height:2.2px;background:#dfa3e8;"></div>
<div class="a" style="left:198.8px;top:717.8px;width:48.4px;height:2.2px;background:#dfa3e8;"></div>
<svg style="left:16px;top:692.2px" width="16" height="15.6" viewBox="0 0 16 15.6"><path d="M0 2.2L6.6 1.2V7.4H0ZM7.6 1.1L16 0V7.4H7.6ZM0 8.3H6.6V14.5L0 13.5ZM7.6 8.3H16V15.6L7.6 14.5Z" fill="#fff"/></svg>
<svg style="left:60px;top:689px" width="24" height="24" viewBox="0 0 24 24"><circle cx="14.2" cy="9.4" r="6.6" fill="none" stroke="#fff" stroke-width="2"/><path d="M9.6 14.2L1.6 21.6" stroke="#fff" stroke-width="2.4"/></svg>
<svg style="left:110.6px;top:688px" width="24.4" height="24.4" viewBox="0 0 24.4 24.4"><defs><linearGradient id="eg1" x1="0" y1="0" x2="1" y2="1"><stop offset="0" stop-color="#35c1f1"/><stop offset="1" stop-color="#0c59a4"/></linearGradient><linearGradient id="eg2" x1="0" y1="0" x2="1" y2="0"><stop offset="0" stop-color="#2bc3d2"/><stop offset="1" stop-color="#6fd84a"/></linearGradient></defs><circle cx="12.2" cy="12.2" r="12" fill="url(#eg1)"/><path d="M1 9.6Q3.6 .6 12.6 .2Q21.6 .6 24 9.4Q24.6 14.6 19 15.2Q14.6 15 16 11.6Q14.6 7 9.4 7.2Q4 7.6 1 9.6Z" fill="url(#eg2)"/><path d="M8.2 12.6Q9 9.4 12.4 9.4Q15.4 9.6 15.4 12.4Q15.2 15 17.6 16.4Q20.4 17.6 22.6 16Q19.4 22.6 13 22.4Q8 21.6 8.2 12.6Z" fill="#101010"/><path d="M1.2 9.2Q.4 16 5.6 21.2Q10 24.8 15.4 23.6Q9.4 21.4 8.4 15.6Q7.8 11.4 10.8 8.4Q5 6.600 1.2 9.2Z" fill="#0e5aa6" opacity=".75"/></svg>
<svg style="left:164px;top:688px" width="19.4" height="23.6" viewBox="0 0 19.4 23.6"><path d="M1.4 0H12.4L19.4 7V22.2Q19.4 23.6 18 23.6H1.4Q0 23.6 0 22.2V1.4Q0 0 1.4 0Z" fill="#2a8fdc"/><path d="M12.4 0L19.4 7H13.8Q12.4 7 12.4 5.6Z" fill="#0e5aa0"/><path d="M12.4 0L19.4 7L19.4 3Q17 .4 12.4 0Z" fill="#7cc4f2"/><rect x="3.4" y="10" width="5.4" height="4.4" fill="#bfe0f6"/><path d="M10.4 10.6H15.8M10.4 13.4H15.8M3.4 16.6H15.8M3.4 19.2H13" stroke="#bfe0f6" stroke-width="1.2"/></svg>
<svg style="left:212px;top:688px" width="23.4" height="22.6" viewBox="0 0 23.4 22.6"><defs><linearGradient id="cg" x1="0" y1="1" x2="1" y2="0"><stop offset="0" stop-color="#1de04a"/><stop offset=".55" stop-color="#12b83a"/><stop offset="1" stop-color="#075c1c"/></linearGradient></defs><rect x=".8" y=".8" width="21.8" height="21" rx="5.6" fill="url(#cg)" stroke="#8af0a0" stroke-width="1.2"/><path d="M5.4 5.4L17.6 16.8" stroke="#e4fbe8" stroke-width="3" stroke-linecap="round"/></svg>
<svg style="left:1031px;top:696.6px" width="12.6" height="7" viewBox="0 0 12.6 7"><path d="M.7 6.4L6.3 .9L11.9 6.4" fill="none" stroke="#fff" stroke-width="1.3"/></svg>
<svg style="left:1053.4px;top:694.6px" width="17" height="11" viewBox="0 0 17 11"><rect x="4.6" y="3" width="11.4" height="6.6" fill="#fff" stroke="#fff" stroke-width=".9"/><rect x="16.2" y="5" width="1" height="2.6" fill="#fff"/><path d="M1.4 0V2M3.4 0V2M.4 2H4.4V4Q4.400 5.600 2.4 5.600Q.4 5.600 .4 4ZM2.4 5.600V8.400H5" fill="none" stroke="#fff" stroke-width=".9"/></svg>
<svg style="left:1080px;top:694px" width="12.4" height="12.4" viewBox="0 0 12.4 12.4"><path d="M.6 11.8A11.2 11.2 0 0 1 11.8 .6" fill="none" stroke="#fff" stroke-width="1.2"/><path d="M4.2 11.8A7.600 7.600 0 0 1 11.8 4.200" fill="none" stroke="#bbb" stroke-width="1.2"/><path d="M7.6 11.8A4.200 4.200 0 0 1 11.8 7.600" fill="none" stroke="#999" stroke-width="1.2"/><circle cx="11" cy="11" r="1.300" fill="#fff"/></svg>
<svg style="left:1101px;top:693.6px" width="16.4" height="13.4" viewBox="0 0 16.4 13.4"><path d="M.6 4.400H3.400L7 1V12.400L3.400 9H.6Z" fill="none" stroke="#fff" stroke-width="1.100" stroke-linejoin="round"/><path d="M9.400 4.400Q11 6.700 9.400 9" fill="none" stroke="#ddd" stroke-width="1"/><path d="M11.400 2.800Q14 6.700 11.400 10.600" fill="none" stroke="#aaa" stroke-width="1"/><path d="M13.400 1.200Q17 6.700 13.400 12.200" fill="none" stroke="#777" stroke-width="1"/></svg>
<div class="t" style="left:1128.6px;top:693.4px;font-size:12px;letter-spacing:-1.468px;color:#fff;">ENG</div>
<div class="t" style="left:1170.2px;top:684.4px;font-size:12px;letter-spacing:-0.270px;color:#fff;">9:28 PM</div>
<div class="t" style="left:1164.2px;top:702.7px;font-size:12px;letter-spacing:0.269px;color:#fff;">3/31/2025</div>
<svg style="left:1239px;top:692px" width="16.4" height="15.6" viewBox="0 0 16.4 15.6"><path d="M0 0H16.400V11.600H10.600L8.200 14.800L5.800 11.600H0Z" fill="#fff"/><path d="M3.400 3.400H13M3.400 5.800H13M3.400 8.200H10" stroke="#101010" stroke-width=".9"/></svg>
<div class="a" style="left:1275.4px;top:680.3px;width:1px;height:39.7px;background:#4a4a4a;"></div>
<!-- s_overlay -->
<div class="a" style="left:1145.6px;top:447.6px;width:25.6px;height:223.4px;background:#1a1a1a;border-radius:3.4px"></div>
<svg style="left:1148.6px;top:451.4px" width="9" height="9" viewBox="0 0 9 9"><circle cx="4.5" cy="4.3" r="2.9" fill="none" stroke="#e8e8e8" stroke-width="1.1"/><path d="M.6 8.2Q5 6.600 8.4 .6" fill="none" stroke="#e8e8e8" stroke-width=".9"/><circle cx="5" cy="3.800" r=".9" fill="#e8e8e8"/></svg>
<svg style="left:1160.4px;top:454.4px" width="8" height="2" viewBox="0 0 8 2"><rect x="0" y="0" width="1.800" height="1.800" fill="#eee"/><rect x="2.900" y="0" width="1.800" height="1.800" fill="#eee"/><rect x="5.800" y="0" width="1.800" height="1.800" fill="#eee"/></svg>
<svg style="left:1148.6px;top:468.2px" width="19.6" height="13.6" viewBox="0 0 19.6 13.6"><path d="M0 3H5L6.800 0H12.800L14.600 3H19.600V13.600H0Z" fill="#fff"/><circle cx="9.600" cy="8" r="3.300" fill="#fff" stroke="#1a1a1a" stroke-width="1.300"/><circle cx="16.400" cy="5" r=".7" fill="#1a1a1a"/></svg>
<svg style="left:1148.8px;top:492.8px" width="19" height="19" viewBox="0 0 19 19"><circle cx="9.500" cy="9.500" r="8.800" fill="none" stroke="#d9c6bd" stroke-width="1.100"/><circle cx="9.500" cy="9.500" r="6.700" fill="#fff"/></svg>
<div class="t" style="left:1148.0px;top:515.4px;font-size:8.6px;letter-spacing:-0.319px;color:#e4e4e4;font-weight:bold;">00:13</div>
<svg style="left:1150.6px;top:532.4px" width="16" height="18.6" viewBox="0 0 16 18.6"><rect x="4.600" y="0" width="6" height="11" rx="3" fill="#fff"/><path d="M2 7.400Q2 13.400 7.600 13.400Q13.200 13.400 13.200 7.400" fill="none" stroke="#fff" stroke-width="1.200"/><path d="M7.600 13.400V17.400M3.600 17.800H11.600" stroke="#fff" stroke-width="1.300"/><rect x="10" y="10" width="4.800" height="4.800" rx=".8" fill="#d8343c"/><path d="M11.200 11.200L13.600 13.600M13.600 11.200L11.200 13.600" stroke="#fff" stroke-width=".8"/></svg>
<svg style="left:1149px;top:560.6px" width="19.6" height="14" viewBox="0 0 19.6 14"><path d="M0 4.200H4L10 0V14L4 9.800H0Z" fill="#fff"/><path d="M12 4.200Q13.600 7 12 9.800" fill="none" stroke="#fff" stroke-width="1.200"/><path d="M14.200 2.400Q16.800 7 14.200 11.600" fill="none" stroke="#fff" stroke-width="1.200"/><path d="M16.400 .8Q20 7 16.400 13.200" fill="none" stroke="#fff" stroke-width="1.200"/></svg>
<svg style="left:1149.6px;top:584.6px" width="18" height="21" viewBox="0 0 18 21"><circle cx="8.400" cy="8.400" r="7.400" fill="none" stroke="#fff" stroke-width="1.800"/><circle cx="8.400" cy="8.400" r="3.800" fill="#fff"/><circle cx="9.800" cy="7" r="1.500" fill="#1a1a1a"/><path d="M3.400 17.400H13.400" stroke="#fff" stroke-width="1.500"/><path d="M2 20H14.800" stroke="#fff" stroke-width="1.700"/><rect x="11.400" y="14" width="5" height="5" rx=".8" fill="#d8343c"/><path d="M12.600 15.200L15.200 17.800M15.200 15.200L12.600 17.800" stroke="#fff" stroke-width=".8"/></svg>
<svg style="left:1147px;top:610.8px" width="23" height="1.4" viewBox="0 0 23 1.4"><path d="M0 .7H23" stroke="#fff" stroke-width="1.300" stroke-dasharray="2 1"/></svg>
<svg style="left:1149px;top:621px" width="19.4" height="15" viewBox="0 0 19.4 15"><path d="M.6 11.400V.6H16" fill="none" stroke="#fff" stroke-width="1.200"/><rect x="3.400" y="3.200" width="16" height="11.800" fill="#fff"/></svg>
<svg style="left:1149px;top:647px" width="18.8" height="18.8" viewBox="0 0 18.8 18.8"><path d="M7.45 0.21L11.35 0.21L11.41 2.74L14.16 4.33L16.39 3.11L18.34 6.50L16.17 7.81L16.17 10.99L18.34 12.30L16.39 15.69L14.16 14.47L11.41 16.06L11.35 18.59L7.45 18.59L7.39 16.06L4.64 14.47L2.41 15.69L0.46 12.30L2.63 10.99L2.63 7.81L0.46 6.50L2.41 3.11L4.64 4.33L7.39 2.74Z" fill="#fff" stroke="#fff" stroke-width=".6" stroke-linejoin="round"/><circle cx="9.4" cy="9.4" r="2.82" fill="#1a1a1a"/></svg>
<svg style="left:162.6px;top:610.2px" width="15.4" height="23.1" viewBox="0 0 14 21"><path d="M1 1.200V14.400L4.200 11.600L7 18.600L9.800 17.400L7 10.800H11.600Z" fill="#fff" stroke="#111" stroke-width="1.100" stroke-linejoin="round"/></svg>
</body></html>
